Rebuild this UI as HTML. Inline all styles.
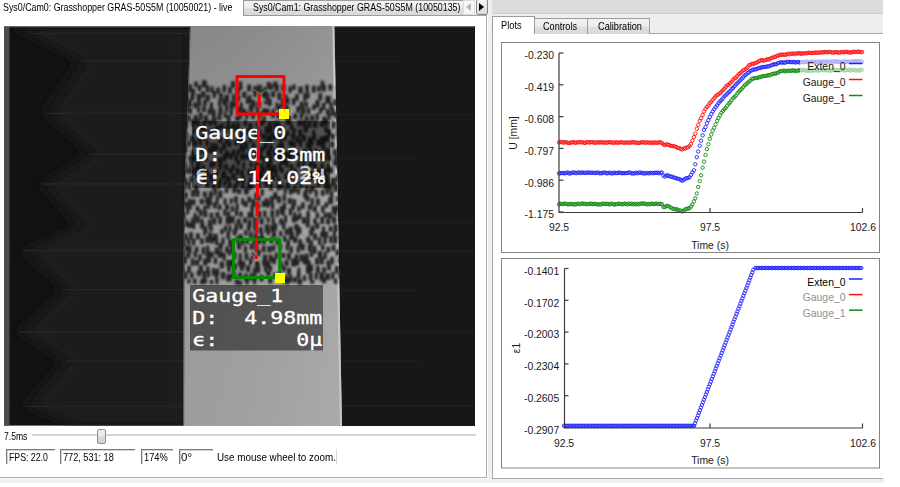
<!DOCTYPE html>
<html><head><meta charset="utf-8"><title>Cam view</title><style>
html,body{margin:0;padding:0}
body{width:900px;height:487px;overflow:hidden;background:#fff;position:relative;font-family:"Liberation Sans",Arial,sans-serif;font-size:9.8px;color:#000}
.a{position:absolute;white-space:nowrap}
.fld{position:absolute;top:449px;height:15px;border-top:1px solid #7a7a7a;border-left:1px solid #7a7a7a;box-sizing:border-box;box-shadow:inset 1px 1px 0 #d4d4d4}
.tab{position:absolute;box-sizing:border-box;border:1px solid #9a9ca2;border-bottom:none;background:linear-gradient(#f3f3f3 0,#ececec 48%,#dfdfdf 52%,#d8d8d8 100%)}
</style></head><body>
<div class="a" style="left:3px;top:2px;font-size:10.4px;line-height:12px;transform:scaleX(0.8521);transform-origin:0 0;">Sys0/Cam0: Grasshopper GRAS-50S5M (10050021) - live</div>
<div class="tab" style="left:243px;top:0;width:221px;height:16px;border-bottom:1px solid #9a9ca2;overflow:hidden"></div>
<div class="a" style="left:252.7px;top:0;width:210px;height:15px;overflow:hidden"><div class="a" style="left:0px;top:2px;font-size:10.4px;line-height:12px;transform:scaleX(0.8491);transform-origin:0 0;">Sys0/Cam1: Grasshopper GRAS-50S5M (10050135) -</div></div>
<div class="a" style="left:463px;top:0;width:12px;height:15px;background:#f6f6f6;border:1px solid #dcdcdc;box-sizing:border-box"></div>
<div class="a" style="left:466px;top:3px;width:0;height:0;border:4px solid transparent;border-right:5px solid #b8b8b8;border-left:none"></div>
<div class="a" style="left:476px;top:-1px;width:12px;height:16px;background:linear-gradient(#f4f4f4,#dadada);border:1px solid #858585;box-sizing:border-box;border-radius:2px"></div>
<div class="a" style="left:479px;top:2.7px;width:0;height:0;border:4px solid transparent;border-left:5px solid #000;border-right:none"></div>
<svg id="cam" width="470.5" height="399.6" viewBox="4 26 470.5 399.6" style="position:absolute;left:4px;top:26px"><defs><filter id="b" x="-5%" y="-5%" width="110%" height="110%"><feGaussianBlur stdDeviation="0.85"/></filter><filter id="b2" x="-10%" y="-10%" width="120%" height="120%"><feGaussianBlur stdDeviation="9 4"/></filter><linearGradient id="sg" x1="0" y1="26" x2="0" y2="425" gradientUnits="userSpaceOnUse"><stop offset="0" stop-color="#8d8d8d"/><stop offset="0.14" stop-color="#929292"/><stop offset="0.45" stop-color="#a0a0a0"/><stop offset="1" stop-color="#a4a4a4"/></linearGradient><linearGradient id="hg" x1="190" y1="0" x2="340" y2="0" gradientUnits="userSpaceOnUse"><stop offset="0" stop-color="#000" stop-opacity="0.04"/><stop offset="1" stop-color="#fff" stop-opacity="0.07"/></linearGradient><clipPath id="sc"><polygon points="190,26 334.5,26 342,426 183.3,426 184,205 188,100"/></clipPath></defs><rect x="4" y="26" width="470.5" height="399.6" fill="#121212"/><path filter="url(#b2)" fill="#1b1b1b" d="M12 26H190V113H47L82 61zM47 113.5H190V184H43L92 154zM43 184.5H190V250H25L80 226zM25 251H190V332H20L66 290zM20 332.5H190V406H27L66 361zM27 406.5H190V426H75z"/><path fill="#171717" d="M334 26H475V426H342z"/><rect x="33" y="32.7" width="157" height="1.4" fill="#272727"/><rect x="82" y="60.3" width="108" height="1.4" fill="#272727"/><rect x="47" y="112.7" width="143" height="1.4" fill="#272727"/><rect x="92" y="153.3" width="98" height="1.4" fill="#272727"/><rect x="43" y="183.3" width="147" height="1.4" fill="#272727"/><rect x="25" y="249.9" width="165" height="1.4" fill="#272727"/><rect x="66" y="288.9" width="124" height="1.4" fill="#272727"/><rect x="20" y="331.3" width="170" height="1.4" fill="#272727"/><rect x="66" y="360.3" width="124" height="1.4" fill="#272727"/><rect x="27" y="405.8" width="163" height="1.4" fill="#272727"/><rect x="334" y="39.3" width="140" height="1.4" fill="#1f1f1f"/><rect x="334" y="60.3" width="70" height="1.4" fill="#1f1f1f"/><rect x="334" y="114.3" width="140" height="1.4" fill="#1f1f1f"/><rect x="334" y="158.3" width="81" height="1.4" fill="#1f1f1f"/><rect x="334" y="183.3" width="140" height="1.4" fill="#1f1f1f"/><rect x="334" y="221.3" width="140" height="1.4" fill="#1f1f1f"/><rect x="334" y="250.3" width="140" height="1.4" fill="#1f1f1f"/><rect x="334" y="289.3" width="86" height="1.4" fill="#1f1f1f"/><rect x="334" y="331.3" width="140" height="1.4" fill="#1f1f1f"/><rect x="334" y="360.3" width="86" height="1.4" fill="#1f1f1f"/><rect x="334" y="405.3" width="140" height="1.4" fill="#1f1f1f"/><rect x="4" y="26" width="5.5" height="399.6" fill="#4c4c4c"/><rect x="4" y="26" width="470.5" height="1.2" fill="#6a6a6a"/><polygon points="190,26 334.5,26 342,426 183.3,426 184,205 188,100" fill="url(#sg)"/><polygon points="190,26 334.5,26 342,426 183.3,426 184,205 188,100" fill="url(#hg)"/><line x1="333.3" y1="26" x2="341" y2="426" stroke="#c6c6c6" stroke-width="2"/><polyline points="190.4,26 188.4,100 184.4,205 183.7,426" fill="none" stroke="#5a5a5a" stroke-width="1"/><g clip-path="url(#sc)"><path filter="url(#b)" fill="#222222" d="M194.2 81.4h3.5v5.7h-3.5zM201.9 80.2h4.8v7.4h-4.8zM231.0 81.3h4.3v6.4h-4.3zM238.6 81.2h3.5v6.2h-3.5zM266.7 81.9h4.0v6.5h-4.0zM273.3 81.4h4.1v6.3h-4.1zM320.6 80.7h3.4v6.5h-3.4zM180.7 85.9h4.3v7.0h-4.3zM187.9 84.6h4.2v7.6h-4.2zM191.2 88.8h3.9v6.6h-3.9zM197.8 85.1h3.5v5.9h-3.5zM205.9 85.6h3.7v6.7h-3.7zM210.6 86.5h3.1v6.4h-3.1zM216.3 87.6h3.8v6.1h-3.8zM222.5 85.1h3.5v7.1h-3.5zM228.0 87.0h3.8v6.5h-3.8zM235.5 87.4h4.2v7.5h-4.2zM238.8 84.4h3.7v5.6h-3.7zM247.2 84.6h4.0v6.9h-4.0zM253.2 85.9h3.7v7.6h-3.7zM257.2 84.8h4.7v7.8h-4.7zM263.1 87.0h3.8v5.5h-3.8zM268.7 84.0h4.1v6.0h-4.1zM274.6 84.6h4.3v6.7h-4.3zM281.1 84.2h4.3v6.8h-4.3zM288.4 86.2h3.5v6.6h-3.5zM292.3 84.4h3.3v5.5h-3.3zM298.3 86.4h4.5v7.0h-4.5zM305.1 84.8h3.7v7.5h-3.7zM311.9 85.8h3.8v6.9h-3.8zM317.1 85.9h3.6v5.5h-3.6zM321.5 84.2h4.2v7.3h-4.2zM328.4 84.6h3.7v6.0h-3.7zM335.9 85.4h3.6v5.4h-3.6zM340.3 83.8h3.4v5.6h-3.4zM177.1 93.7h3.8v7.1h-3.8zM183.3 95.8h3.3v7.0h-3.3zM190.2 94.5h4.2v5.7h-4.2zM196.7 93.7h4.3v6.9h-4.3zM201.2 91.2h4.2v6.6h-4.2zM205.9 94.8h4.1v6.5h-4.1zM212.6 91.1h3.4v7.0h-3.4zM218.9 93.2h4.0v7.1h-4.0zM224.4 94.6h4.7v7.4h-4.7zM231.7 94.2h3.5v6.5h-3.5zM236.0 95.8h4.3v5.4h-4.3zM242.2 91.8h4.3v5.9h-4.3zM247.6 95.0h3.8v7.4h-3.8zM253.2 90.7h3.7v6.4h-3.7zM261.7 90.7h4.1v7.2h-4.1zM265.8 92.6h3.6v7.6h-3.6zM271.0 91.2h4.2v6.0h-4.2zM277.3 92.6h4.3v7.3h-4.3zM284.4 94.4h3.2v7.0h-3.2zM295.2 94.1h3.5v6.6h-3.5zM303.2 93.3h3.4v7.4h-3.4zM306.5 92.5h3.2v5.9h-3.2zM318.4 93.3h3.9v7.3h-3.9zM325.3 95.7h5.4v8.1h-5.4zM336.5 91.3h3.3v6.5h-3.3zM344.0 93.1h3.8v5.5h-3.8zM180.4 98.3h3.4v6.8h-3.4zM187.2 99.6h4.6v7.5h-4.6zM193.3 102.2h3.7v5.9h-3.7zM197.2 100.2h4.0v6.3h-4.0zM203.1 99.4h3.6v6.9h-3.6zM209.6 102.6h3.5v7.2h-3.5zM217.8 100.2h3.3v5.9h-3.3zM222.0 98.7h5.6v6.5h-5.6zM229.4 101.4h4.4v7.4h-4.4zM232.6 101.1h3.6v6.2h-3.6zM239.5 102.6h3.3v7.5h-3.3zM245.7 97.9h3.7v6.2h-3.7zM250.3 99.7h5.4v7.9h-5.4zM256.9 101.5h4.3v6.1h-4.3zM264.3 99.2h3.5v5.4h-3.5zM268.0 98.8h3.7v7.5h-3.7zM275.4 102.4h3.3v7.2h-3.3zM280.7 99.3h4.8v7.9h-4.8zM285.8 97.8h3.8v6.1h-3.8zM291.8 98.1h3.7v7.0h-3.7zM299.6 101.5h4.2v6.9h-4.2zM304.5 101.4h3.4v5.9h-3.4zM315.4 100.1h4.2v7.2h-4.2zM321.6 102.7h3.9v7.4h-3.9zM329.4 102.5h3.2v6.7h-3.2zM333.5 98.9h3.9v6.8h-3.9zM339.3 99.2h3.4v7.1h-3.4zM178.2 107.8h3.2v5.8h-3.2zM185.4 106.1h3.8v6.2h-3.8zM188.8 108.3h3.4v5.4h-3.4zM196.9 106.9h3.3v5.4h-3.3zM202.0 106.4h3.8v5.7h-3.8zM207.5 108.7h4.4v5.8h-4.4zM212.0 109.3h3.6v7.4h-3.6zM218.4 106.6h4.2v7.2h-4.2zM224.8 105.1h3.4v7.0h-3.4zM229.6 108.9h3.3v6.7h-3.3zM237.3 106.7h4.0v6.4h-4.0zM242.1 108.5h4.1v6.4h-4.1zM248.6 105.0h4.9v7.3h-4.9zM255.6 107.2h3.2v6.5h-3.2zM262.2 108.3h4.2v5.8h-4.2zM265.4 108.6h4.3v5.5h-4.3zM271.7 108.7h3.3v6.5h-3.3zM277.7 104.7h3.3v5.8h-3.3zM285.1 105.1h3.8v6.8h-3.8zM296.2 106.4h4.1v6.4h-4.1zM301.1 107.8h4.4v6.7h-4.4zM306.7 107.7h3.7v6.5h-3.7zM312.2 104.5h3.6v5.6h-3.6zM318.7 107.7h3.7v5.7h-3.7zM325.9 109.0h4.1v6.3h-4.1zM330.9 107.9h3.7v7.5h-3.7zM337.4 106.6h3.4v5.5h-3.4zM342.1 105.5h3.9v6.5h-3.9zM180.4 111.7h4.3v7.1h-4.3zM186.8 115.3h3.7v5.9h-3.7zM193.6 115.0h4.2v7.0h-4.2zM198.8 112.8h3.9v7.5h-3.9zM203.8 115.3h4.3v7.0h-4.3zM211.8 114.7h4.0v6.9h-4.0zM217.5 113.7h4.0v6.7h-4.0zM223.6 112.2h3.1v5.6h-3.1zM226.7 115.0h3.9v6.9h-3.9zM235.1 115.7h4.3v5.5h-4.3zM239.1 112.0h3.1v7.3h-3.1zM245.2 111.9h3.2v7.1h-3.2zM251.0 112.9h4.0v6.2h-4.0zM258.1 111.6h3.6v6.4h-3.6zM262.7 115.9h3.2v7.2h-3.2zM271.0 111.4h3.7v6.5h-3.7zM276.5 112.8h4.3v6.0h-4.3zM281.7 111.8h4.1v6.9h-4.1zM286.9 116.0h4.4v8.2h-4.4zM293.1 113.4h4.2v5.9h-4.2zM299.5 113.2h3.5v5.7h-3.5zM304.7 115.4h3.9v5.7h-3.9zM310.2 115.1h4.2v5.7h-4.2zM315.6 113.1h3.3v7.5h-3.3zM322.2 116.5h4.1v7.0h-4.1zM327.6 113.4h3.1v6.3h-3.1zM334.3 112.1h3.9v6.3h-3.9zM341.1 113.6h3.4v7.0h-3.4zM178.6 121.6h3.7v6.1h-3.7zM184.6 121.6h3.4v6.3h-3.4zM191.2 119.3h4.0v7.1h-4.0zM195.8 119.1h4.1v7.5h-4.1zM202.3 121.0h3.9v7.2h-3.9zM208.1 120.3h4.1v5.7h-4.1zM213.1 118.4h3.6v6.3h-3.6zM220.1 123.2h3.8v5.9h-3.8zM226.1 122.5h3.9v6.4h-3.9zM231.5 122.6h4.2v6.4h-4.2zM236.5 122.7h3.4v6.2h-3.4zM243.6 119.8h3.4v6.1h-3.4zM248.4 123.1h4.2v5.5h-4.2zM255.8 121.6h3.1v5.4h-3.1zM259.5 119.5h4.1v6.2h-4.1zM267.8 121.5h4.1v6.9h-4.1zM273.0 121.1h4.1v6.4h-4.1zM277.1 120.9h3.2v6.4h-3.2zM285.4 118.3h4.2v6.4h-4.2zM289.8 123.3h3.2v6.8h-3.2zM297.4 120.0h4.4v6.5h-4.4zM302.3 120.1h4.2v6.2h-4.2zM307.6 120.5h3.8v7.2h-3.8zM313.0 120.9h4.4v6.8h-4.4zM319.9 121.6h4.1v5.5h-4.1zM324.9 118.3h3.3v7.4h-3.3zM331.8 121.5h3.9v6.9h-3.9zM337.2 122.3h4.4v6.6h-4.4zM342.8 122.6h4.1v6.6h-4.1zM180.8 128.5h4.3v5.5h-4.3zM192.7 127.3h3.2v6.8h-3.2zM199.3 125.8h4.4v5.6h-4.4zM203.8 129.0h3.3v5.5h-3.3zM209.2 128.5h4.0v6.4h-4.0zM214.8 125.3h5.1v8.0h-5.1zM223.5 127.7h3.2v6.2h-3.2zM229.2 127.1h3.9v6.8h-3.9zM235.0 128.1h3.5v5.5h-3.5zM240.3 130.3h4.2v6.7h-4.2zM246.5 128.3h4.3v7.2h-4.3zM252.1 129.4h4.3v5.5h-4.3zM257.0 129.6h4.1v6.9h-4.1zM264.6 126.2h4.1v7.4h-4.1zM268.6 126.5h4.1v7.1h-4.1zM274.5 128.2h4.3v7.3h-4.3zM280.3 126.1h4.0v6.2h-4.0zM285.7 130.4h3.6v5.6h-3.6zM292.6 127.9h3.1v5.5h-3.1zM298.2 129.3h3.7v7.5h-3.7zM303.4 126.2h4.5v6.4h-4.5zM312.2 129.9h3.2v6.7h-3.2zM324.2 126.4h3.2v6.0h-3.2zM327.1 129.3h4.0v6.8h-4.0zM335.8 128.7h3.5v6.7h-3.5zM339.1 127.7h3.3v5.9h-3.3zM177.0 132.3h4.3v5.9h-4.3zM183.7 132.6h4.3v7.3h-4.3zM189.7 135.4h4.5v6.7h-4.5zM196.9 133.5h3.6v5.7h-3.6zM201.6 133.8h4.3v5.7h-4.3zM217.8 136.3h4.7v6.5h-4.7zM225.0 136.8h3.4v6.7h-3.4zM230.1 132.5h3.2v6.7h-3.2zM237.7 136.3h5.1v6.6h-5.1zM241.5 136.3h3.5v7.3h-3.5zM248.7 136.6h3.4v5.8h-3.4zM255.0 132.1h3.8v6.4h-3.8zM261.8 133.8h4.0v6.2h-4.0zM266.5 134.8h5.0v7.4h-5.0zM271.1 133.4h5.4v6.3h-5.4zM278.6 135.1h3.8v6.9h-3.8zM283.0 134.7h3.8v6.0h-3.8zM291.3 132.9h3.8v7.0h-3.8zM295.7 136.5h3.8v6.3h-3.8zM301.4 134.4h4.4v7.2h-4.4zM307.9 137.1h4.3v5.9h-4.3zM312.3 134.4h3.8v5.4h-3.8zM320.0 136.3h5.4v8.1h-5.4zM324.8 134.9h4.3v6.8h-4.3zM330.7 133.7h3.9v5.7h-3.9zM337.2 134.9h3.3v5.7h-3.3zM342.4 132.6h3.8v7.2h-3.8zM181.7 141.4h3.8v6.7h-3.8zM186.9 141.0h3.9v5.4h-3.9zM192.8 140.5h4.4v6.1h-4.4zM198.5 139.3h3.6v6.4h-3.6zM205.4 139.8h3.5v6.2h-3.5zM210.6 142.8h4.1v7.1h-4.1zM215.2 143.5h3.1v7.1h-3.1zM222.0 143.1h4.2v6.7h-4.2zM227.5 141.0h3.8v6.2h-3.8zM233.9 140.0h3.5v5.7h-3.5zM239.4 143.4h4.2v7.5h-4.2zM244.5 141.9h3.7v7.4h-3.7zM251.9 142.6h3.6v6.2h-3.6zM263.6 141.3h3.9v7.6h-3.9zM268.9 144.1h4.2v6.5h-4.2zM277.0 143.6h3.6v5.7h-3.6zM280.3 142.3h3.9v6.2h-3.9zM288.1 140.6h4.0v5.4h-4.0zM292.1 141.6h3.8v6.0h-3.8zM298.7 139.6h3.3v7.1h-3.3zM305.9 142.2h5.3v6.3h-5.3zM310.3 139.9h3.4v5.6h-3.4zM316.3 139.3h4.3v6.7h-4.3zM321.1 143.8h4.2v6.1h-4.2zM330.0 141.6h4.3v5.9h-4.3zM339.6 141.9h3.2v6.6h-3.2zM179.0 147.7h3.4v5.8h-3.4zM183.4 146.7h4.0v5.6h-4.0zM190.9 150.1h3.3v6.2h-3.3zM197.1 148.5h3.4v6.4h-3.4zM201.9 147.8h3.4v6.7h-3.4zM207.6 147.3h4.1v6.2h-4.1zM212.1 146.8h4.2v6.1h-4.2zM219.3 147.4h3.2v6.1h-3.2zM224.9 150.6h4.1v7.3h-4.1zM231.7 149.4h3.6v6.3h-3.6zM236.5 149.2h3.3v5.7h-3.3zM241.4 146.7h3.4v6.1h-3.4zM247.8 150.3h3.8v7.0h-3.8zM253.1 150.2h5.3v6.8h-5.3zM259.8 146.5h4.1v5.9h-4.1zM266.2 149.8h5.4v6.8h-5.4zM273.0 149.7h4.2v6.8h-4.2zM278.3 150.7h4.5v7.9h-4.5zM284.3 150.9h3.9v6.6h-3.9zM289.1 147.5h3.3v7.0h-3.3zM295.8 150.8h3.6v6.1h-3.6zM302.9 148.8h4.1v5.8h-4.1zM308.9 146.5h3.5v6.2h-3.5zM314.3 148.2h3.2v6.1h-3.2zM318.0 151.1h4.1v5.6h-4.1zM325.5 148.2h4.5v7.4h-4.5zM332.8 149.3h3.4v5.9h-3.4zM336.6 146.9h3.9v7.3h-3.9zM344.0 147.6h3.3v7.2h-3.3zM182.1 154.0h3.2v6.6h-3.2zM188.3 155.4h3.7v5.7h-3.7zM191.7 155.1h5.6v6.4h-5.6zM197.1 157.2h4.2v7.1h-4.2zM204.3 154.6h3.7v6.9h-3.7zM217.7 157.3h4.4v7.5h-4.4zM222.6 154.3h3.8v7.5h-3.8zM229.4 152.9h3.3v6.9h-3.3zM234.4 155.0h3.8v6.6h-3.8zM240.2 153.4h5.4v6.8h-5.4zM246.1 154.0h3.8v5.6h-3.8zM258.4 153.3h4.2v6.3h-4.2zM262.4 156.8h3.2v5.9h-3.2zM268.9 156.5h3.7v7.4h-3.7zM276.6 153.7h4.1v6.2h-4.1zM280.9 156.6h5.5v7.8h-5.5zM288.2 153.4h4.3v6.9h-4.3zM293.4 153.4h3.1v5.6h-3.1zM299.6 154.8h3.3v7.3h-3.3zM303.3 154.6h3.3v6.5h-3.3zM311.8 156.3h3.6v6.4h-3.6zM317.1 153.2h3.5v5.9h-3.5zM322.2 155.2h3.9v6.3h-3.9zM327.0 155.2h4.4v5.5h-4.4zM334.4 154.2h3.8v6.6h-3.8zM341.2 157.3h4.1v6.8h-4.1zM179.2 164.6h4.0v6.1h-4.0zM183.4 162.6h3.6v5.5h-3.6zM189.4 161.0h3.4v6.2h-3.4zM195.5 162.7h4.7v6.6h-4.7zM201.8 164.6h3.5v7.4h-3.5zM209.1 161.6h4.1v6.3h-4.1zM212.7 161.0h3.1v5.8h-3.1zM218.3 162.8h4.2v6.8h-4.2zM223.9 163.9h4.2v6.2h-4.2zM231.5 164.5h3.4v6.1h-3.4zM236.5 160.0h3.6v5.5h-3.6zM242.1 162.1h3.1v7.4h-3.1zM249.5 161.4h3.2v5.7h-3.2zM254.5 162.5h3.9v6.6h-3.9zM259.8 163.4h4.1v7.1h-4.1zM265.8 162.4h5.5v6.5h-5.5zM272.0 164.8h4.6v7.9h-4.6zM278.3 162.6h3.3v7.5h-3.3zM285.5 160.5h3.1v7.1h-3.1zM289.6 163.9h3.7v6.1h-3.7zM296.5 161.8h4.2v5.5h-4.2zM302.3 160.9h3.4v6.0h-3.4zM308.3 161.3h4.4v5.9h-4.4zM313.0 163.6h4.2v6.0h-4.2zM320.2 162.8h3.7v6.7h-3.7zM326.4 164.2h3.3v7.3h-3.3zM332.9 159.7h4.3v5.7h-4.3zM336.0 161.5h4.3v7.0h-4.3zM344.1 163.3h3.1v6.5h-3.1zM182.6 168.2h4.2v5.7h-4.2zM187.5 167.4h4.1v6.5h-4.1zM192.3 167.7h4.4v7.3h-4.4zM197.3 166.8h3.8v6.3h-3.8zM205.1 169.4h3.8v6.9h-3.8zM214.8 169.8h4.3v6.0h-4.3zM221.1 171.0h5.3v8.2h-5.3zM228.4 168.2h4.4v5.4h-4.4zM235.7 167.8h3.9v7.0h-3.9zM240.4 170.1h3.5v6.8h-3.5zM247.2 169.1h4.0v6.5h-4.0zM251.9 169.3h3.8v7.2h-3.8zM258.1 170.9h5.5v8.1h-5.5zM262.4 167.4h3.4v5.6h-3.4zM268.2 168.7h4.4v6.9h-4.4zM274.3 170.1h3.6v6.5h-3.6zM279.8 167.6h3.8v5.5h-3.8zM286.4 170.9h3.2v6.8h-3.2zM293.5 168.5h3.2v6.4h-3.2zM305.6 168.5h5.2v6.9h-5.2zM310.8 171.3h4.1v5.5h-4.1zM316.4 169.1h4.3v6.4h-4.3zM323.4 168.7h3.2v6.9h-3.2zM327.6 167.0h5.4v6.4h-5.4zM341.3 171.1h3.3v6.1h-3.3zM177.2 175.1h3.4v7.3h-3.4zM183.3 178.0h4.1v7.3h-4.1zM189.4 175.9h3.7v6.7h-3.7zM195.9 173.8h3.5v6.6h-3.5zM202.5 175.0h4.0v7.2h-4.0zM208.7 173.8h4.9v7.6h-4.9zM212.4 178.3h3.8v7.2h-3.8zM218.4 177.9h3.3v7.4h-3.3zM226.6 175.7h4.0v6.0h-4.0zM231.7 173.7h4.2v6.0h-4.2zM235.9 178.2h3.5v7.3h-3.5zM241.4 175.5h3.9v5.9h-3.9zM248.6 177.0h3.2v7.2h-3.2zM254.8 175.0h3.6v7.1h-3.6zM261.8 176.6h3.8v5.6h-3.8zM265.6 178.3h3.1v6.7h-3.1zM271.0 175.2h3.7v5.9h-3.7zM276.9 176.4h3.2v6.6h-3.2zM284.2 174.0h3.9v5.7h-3.9zM289.0 174.4h4.3v6.1h-4.3zM294.7 178.1h3.3v6.5h-3.3zM302.0 176.1h3.6v5.8h-3.6zM309.0 176.1h4.3v5.4h-4.3zM314.3 174.7h4.1v5.7h-4.1zM318.9 178.1h3.2v6.7h-3.2zM324.1 174.8h5.1v8.4h-5.1zM330.9 177.7h4.9v8.2h-4.9zM336.0 174.8h4.1v6.9h-4.1zM342.3 175.2h4.4v7.6h-4.4zM182.3 184.3h3.9v5.8h-3.9zM187.6 182.2h3.3v7.5h-3.3zM194.2 185.1h4.1v7.2h-4.1zM205.5 181.7h4.2v5.9h-4.2zM211.8 184.0h4.0v6.3h-4.0zM217.4 182.5h3.2v6.8h-3.2zM223.2 180.4h3.7v5.4h-3.7zM228.1 182.1h3.4v6.2h-3.4zM233.4 184.0h3.7v6.9h-3.7zM241.0 181.4h3.5v7.5h-3.5zM247.2 182.5h3.7v7.5h-3.7zM250.7 183.1h3.1v5.8h-3.1zM257.2 180.9h3.8v7.3h-3.8zM264.1 180.8h3.9v6.4h-3.9zM269.1 183.1h4.0v7.4h-4.0zM276.5 184.0h3.8v6.4h-3.8zM279.8 182.1h3.3v7.5h-3.3zM285.7 182.4h4.1v6.8h-4.1zM292.8 185.5h3.9v7.2h-3.9zM299.6 181.8h3.3v6.7h-3.3zM305.0 185.0h3.3v7.0h-3.3zM310.4 185.4h4.4v5.8h-4.4zM316.5 181.0h3.4v6.3h-3.4zM323.9 182.7h4.2v6.8h-4.2zM328.4 183.3h4.0v7.1h-4.0zM333.7 183.7h4.6v7.9h-4.6zM341.7 181.8h3.4v5.6h-3.4zM179.0 187.9h3.5v6.8h-3.5zM183.6 192.2h4.1v6.2h-4.1zM191.0 190.1h3.8v6.9h-3.8zM195.4 189.9h4.2v6.9h-4.2zM202.7 191.4h4.2v5.7h-4.2zM208.8 191.2h4.2v6.8h-4.2zM213.8 188.7h3.2v6.7h-3.2zM218.0 190.8h4.4v7.2h-4.4zM224.6 187.3h3.9v5.7h-3.9zM232.1 187.5h4.2v5.6h-4.2zM237.2 188.4h4.1v5.9h-4.1zM243.8 187.4h5.0v7.1h-5.0zM254.2 192.4h3.2v6.5h-3.2zM260.5 189.1h3.3v6.3h-3.3zM273.2 192.2h4.3v7.0h-4.3zM283.6 187.5h3.3v6.2h-3.3zM288.8 188.1h4.1v6.4h-4.1zM297.0 188.0h3.2v6.6h-3.2zM303.2 191.0h4.3v7.6h-4.3zM308.9 188.0h3.1v5.9h-3.1zM314.6 189.7h3.2v7.4h-3.2zM320.8 189.8h3.9v5.9h-3.9zM325.8 188.0h3.4v6.4h-3.4zM330.0 191.1h3.2v6.4h-3.2zM337.8 190.9h3.7v5.7h-3.7zM344.8 188.5h3.6v7.1h-3.6zM179.7 199.3h5.3v6.3h-5.3zM187.5 199.0h3.9v7.4h-3.9zM191.5 199.3h4.0v5.8h-4.0zM199.6 198.8h4.3v5.4h-4.3zM205.0 197.3h5.3v6.4h-5.3zM208.9 198.1h3.1v7.2h-3.1zM215.5 196.4h3.2v7.5h-3.2zM223.4 198.6h3.2v6.2h-3.2zM229.7 198.2h3.1v5.6h-3.1zM234.0 196.3h3.9v6.8h-3.9zM241.1 197.9h3.1v6.9h-3.1zM247.3 196.5h4.0v6.0h-4.0zM251.6 199.3h4.0v7.5h-4.0zM257.0 195.5h3.6v5.4h-3.6zM264.5 198.2h4.3v7.1h-4.3zM269.9 196.1h3.8v7.5h-3.8zM276.8 196.3h4.3v6.9h-4.3zM282.6 194.3h3.4v7.0h-3.4zM287.8 198.1h4.1v5.9h-4.1zM292.3 199.2h3.9v6.7h-3.9zM305.5 195.6h4.1v5.8h-4.1zM310.6 198.0h3.2v7.5h-3.2zM315.8 198.6h4.1v6.9h-4.1zM328.1 197.6h5.0v6.7h-5.0zM335.9 196.1h4.0v5.7h-4.0zM339.1 195.5h4.1v6.0h-4.1zM177.1 203.1h3.6v6.8h-3.6zM185.0 202.3h3.1v6.4h-3.1zM188.6 203.6h3.3v5.9h-3.3zM195.6 206.0h3.8v5.6h-3.8zM203.1 205.6h3.2v7.5h-3.2zM206.6 201.5h3.4v7.4h-3.4zM212.8 202.2h4.0v6.2h-4.0zM217.7 204.5h3.8v5.5h-3.8zM225.2 204.2h3.9v5.7h-3.9zM230.7 205.8h3.3v5.9h-3.3zM235.5 203.4h3.3v5.8h-3.3zM243.5 201.2h4.3v5.9h-4.3zM250.4 204.3h3.4v7.2h-3.4zM256.2 202.8h3.6v6.2h-3.6zM261.6 201.1h3.9v6.0h-3.9zM265.7 201.7h4.3v5.7h-4.3zM271.0 202.3h3.3v6.7h-3.3zM279.5 206.1h3.4v7.5h-3.4zM282.7 202.6h3.5v7.5h-3.5zM291.1 204.5h3.8v5.7h-3.8zM297.3 206.1h3.4v5.6h-3.4zM301.1 202.3h3.6v6.6h-3.6zM307.7 204.6h4.1v5.4h-4.1zM312.7 206.1h4.1v5.9h-4.1zM321.1 205.8h3.4v7.0h-3.4zM324.6 202.2h3.4v5.5h-3.4zM331.7 206.0h3.9v6.2h-3.9zM335.8 204.6h3.3v6.2h-3.3zM343.6 204.8h4.4v5.8h-4.4zM181.3 212.4h4.2v6.7h-4.2zM186.2 208.4h3.1v5.8h-3.1zM193.5 213.1h3.1v5.7h-3.1zM198.8 209.7h3.6v6.5h-3.6zM203.3 211.2h4.0v6.0h-4.0zM209.5 212.8h3.8v5.5h-3.8zM215.5 212.1h4.1v5.6h-4.1zM223.2 209.2h3.2v6.9h-3.2zM226.9 211.3h3.4v6.0h-3.4zM234.8 209.1h3.5v6.8h-3.5zM239.4 211.4h3.4v5.7h-3.4zM247.4 212.1h3.5v6.1h-3.5zM250.4 210.7h3.3v7.4h-3.3zM257.7 210.7h3.6v7.0h-3.6zM263.2 210.5h3.4v6.9h-3.4zM270.4 209.9h3.7v7.4h-3.7zM275.8 209.4h3.1v7.6h-3.1zM280.7 208.4h4.1v7.1h-4.1zM288.7 208.3h3.5v7.1h-3.5zM293.2 212.3h3.3v5.8h-3.3zM298.2 213.1h3.3v6.0h-3.3zM306.4 211.1h3.5v6.4h-3.5zM315.6 212.4h3.5v5.8h-3.5zM323.6 212.5h3.8v5.4h-3.8zM327.9 212.4h4.2v6.0h-4.2zM333.2 209.2h4.3v6.3h-4.3zM341.6 212.2h4.4v7.0h-4.4zM177.6 219.3h3.3v6.6h-3.3zM185.0 219.5h3.3v7.5h-3.3zM191.0 217.7h3.7v6.1h-3.7zM195.2 216.2h4.4v6.9h-4.4zM200.2 218.8h3.4v6.4h-3.4zM207.9 219.6h3.7v7.4h-3.7zM212.1 218.0h4.2v6.5h-4.2zM218.4 216.8h3.6v7.5h-3.6zM225.5 217.1h5.2v7.1h-5.2zM230.6 216.1h4.1v7.2h-4.1zM236.6 218.6h4.3v5.8h-4.3zM243.0 217.5h4.0v5.7h-4.0zM247.8 219.6h3.8v7.1h-3.8zM253.2 217.5h4.3v7.4h-4.3zM259.5 218.2h4.1v6.3h-4.1zM266.5 217.3h3.2v5.4h-3.2zM271.6 217.6h3.3v6.7h-3.3zM279.1 218.6h4.0v6.0h-4.0zM284.0 215.3h3.2v7.2h-3.2zM291.7 216.6h4.1v5.9h-4.1zM295.4 215.7h3.4v5.6h-3.4zM301.8 217.2h4.4v6.5h-4.4zM306.7 215.8h3.2v6.9h-3.2zM313.2 218.5h3.6v5.7h-3.6zM320.3 216.7h3.9v7.4h-3.9zM326.0 218.7h4.3v5.7h-4.3zM332.0 216.7h4.3v6.6h-4.3zM338.3 215.0h3.5v6.5h-3.5zM343.3 219.7h3.9v6.4h-3.9zM180.2 223.7h3.6v6.2h-3.6zM187.9 222.6h4.0v5.4h-4.0zM191.9 222.1h3.4v7.0h-3.4zM200.1 222.3h4.3v6.4h-4.3zM203.3 226.3h4.1v6.7h-4.1zM209.0 225.5h3.9v5.6h-3.9zM223.9 225.5h3.3v5.8h-3.3zM228.3 225.3h3.1v6.4h-3.1zM234.4 223.6h3.6v7.5h-3.6zM239.0 223.8h4.0v5.4h-4.0zM246.9 224.0h4.0v6.7h-4.0zM253.2 225.0h3.5v6.2h-3.5zM258.7 227.0h4.0v6.1h-4.0zM264.7 224.3h4.7v8.2h-4.7zM270.3 224.8h4.3v6.7h-4.3zM274.1 223.2h3.2v7.3h-3.2zM281.8 222.3h3.7v7.0h-3.7zM288.5 226.7h4.4v6.3h-4.4zM294.3 223.9h4.3v6.4h-4.3zM297.6 226.9h3.8v7.0h-3.8zM305.9 222.0h3.7v5.6h-3.7zM310.7 225.5h4.0v6.2h-4.0zM315.5 222.8h3.8v6.1h-3.8zM321.8 226.5h3.4v7.4h-3.4zM328.6 226.2h3.7v5.6h-3.7zM333.5 224.2h4.2v7.5h-4.2zM340.0 222.7h3.3v6.4h-3.3zM178.8 231.8h3.3v7.3h-3.3zM184.2 233.7h3.6v6.6h-3.6zM189.1 232.0h3.8v7.5h-3.8zM195.8 233.2h4.0v6.2h-4.0zM203.1 229.0h3.1v6.6h-3.1zM208.0 232.3h4.3v7.6h-4.3zM213.2 233.7h4.7v7.5h-4.7zM220.3 228.8h3.4v5.8h-3.4zM226.4 231.4h3.5v7.5h-3.5zM232.6 229.3h4.1v6.0h-4.1zM238.6 233.9h3.9v6.8h-3.9zM244.2 230.0h3.3v5.7h-3.3zM248.8 231.7h3.8v6.3h-3.8zM253.9 232.6h3.4v7.2h-3.4zM260.1 232.7h3.4v6.9h-3.4zM266.8 229.6h3.2v5.6h-3.2zM271.8 231.4h4.3v5.9h-4.3zM279.0 230.9h3.3v5.5h-3.3zM284.6 229.0h3.8v6.1h-3.8zM289.0 232.2h4.9v7.7h-4.9zM295.7 229.7h3.2v6.9h-3.2zM309.1 229.2h3.8v6.5h-3.8zM313.0 233.6h4.2v6.4h-4.2zM320.2 231.7h4.4v5.5h-4.4zM324.1 231.7h4.0v6.2h-4.0zM332.9 231.0h3.1v5.6h-3.1zM338.5 232.4h3.2v6.2h-3.2zM181.5 240.5h3.8v5.8h-3.8zM186.9 238.7h3.4v6.0h-3.4zM191.8 238.4h3.5v7.1h-3.5zM200.1 238.3h3.6v6.0h-3.6zM205.3 236.7h3.7v6.2h-3.7zM209.6 236.8h4.1v6.8h-4.1zM215.0 237.5h3.1v7.5h-3.1zM221.4 237.4h3.2v7.2h-3.2zM228.2 239.3h4.3v7.3h-4.3zM235.6 236.6h3.3v6.0h-3.3zM241.3 237.8h3.3v7.1h-3.3zM245.6 238.7h3.4v5.4h-3.4zM252.6 237.3h4.0v6.8h-4.0zM257.0 236.6h4.2v7.4h-4.2zM262.1 237.3h3.9v6.7h-3.9zM269.2 237.5h4.3v5.7h-4.3zM275.7 237.6h3.1v7.2h-3.1zM282.9 235.9h3.6v5.9h-3.6zM286.8 239.8h3.2v6.0h-3.2zM293.0 236.7h4.3v6.4h-4.3zM298.3 239.3h3.8v7.6h-3.8zM306.1 236.7h4.2v6.2h-4.2zM309.5 240.6h3.6v5.7h-3.6zM317.8 237.4h3.6v7.5h-3.6zM323.1 237.9h3.6v5.9h-3.6zM329.2 235.7h3.4v7.5h-3.4zM333.4 236.5h3.9v6.9h-3.9zM339.2 238.2h3.5v6.6h-3.5zM177.4 246.0h3.8v6.8h-3.8zM185.0 245.4h4.1v6.2h-4.1zM188.5 245.7h3.1v7.5h-3.1zM194.7 246.8h3.8v5.4h-3.8zM201.7 247.0h3.4v7.4h-3.4zM206.1 245.7h3.3v5.8h-3.3zM214.6 247.6h3.7v7.2h-3.7zM218.4 243.0h4.3v6.6h-4.3zM225.1 246.6h3.7v5.8h-3.7zM230.3 246.1h3.6v5.9h-3.6zM237.0 242.6h4.1v7.0h-4.1zM243.6 245.9h3.6v6.6h-3.6zM249.7 243.5h4.0v6.2h-4.0zM254.6 244.5h3.9v5.9h-3.9zM261.7 245.4h3.9v6.8h-3.9zM267.4 246.0h4.2v6.4h-4.2zM272.1 245.1h3.3v5.9h-3.3zM278.5 243.5h3.7v6.6h-3.7zM285.6 243.5h3.1v7.1h-3.1zM289.5 246.3h3.4v6.7h-3.4zM296.5 246.1h3.3v6.6h-3.3zM300.5 243.8h4.4v6.8h-4.4zM307.7 244.4h4.1v7.0h-4.1zM312.4 246.1h4.1v7.6h-4.1zM321.0 244.5h3.5v5.6h-3.5zM326.4 246.8h3.7v5.8h-3.7zM331.6 244.9h3.8v5.9h-3.8zM338.5 247.6h3.1v6.8h-3.1zM342.6 246.2h4.0v5.9h-4.0zM180.8 251.1h3.9v6.1h-3.9zM186.3 252.2h4.2v5.7h-4.2zM193.5 251.3h3.3v6.3h-3.3zM198.1 254.4h3.6v6.4h-3.6zM205.7 251.4h4.1v6.0h-4.1zM209.5 251.7h4.1v6.0h-4.1zM217.7 250.6h5.0v7.1h-5.0zM222.6 253.1h3.2v7.4h-3.2zM227.8 250.1h3.7v5.4h-3.7zM233.1 252.1h3.3v7.2h-3.3zM238.6 253.3h3.2v7.5h-3.2zM244.5 253.0h3.9v7.0h-3.9zM251.1 252.4h3.5v6.0h-3.5zM256.8 250.0h3.8v6.5h-3.8zM262.9 254.5h4.3v7.6h-4.3zM268.6 254.6h3.9v7.2h-3.9zM274.6 252.6h3.4v6.4h-3.4zM281.2 252.8h4.0v5.5h-4.0zM286.8 253.0h4.1v6.8h-4.1zM294.5 254.4h4.1v7.6h-4.1zM299.7 254.3h4.2v7.3h-4.2zM304.5 253.6h4.2v7.3h-4.2zM309.9 251.2h3.2v5.7h-3.2zM317.8 251.0h4.6v7.1h-4.6zM323.8 251.4h3.1v7.5h-3.1zM335.6 250.0h4.2v5.4h-4.2zM341.3 250.2h3.8v6.0h-3.8zM178.9 259.6h3.9v7.4h-3.9zM183.5 256.8h3.5v7.0h-3.5zM190.7 258.6h3.7v7.1h-3.7zM194.9 259.9h4.3v5.7h-4.3zM203.2 258.6h4.1v6.8h-4.1zM207.3 256.4h3.7v6.3h-3.7zM213.7 257.5h3.5v6.5h-3.5zM219.6 261.5h4.6v6.9h-4.6zM226.3 259.9h4.4v7.2h-4.4zM230.3 259.5h3.2v6.6h-3.2zM237.7 260.5h3.9v5.7h-3.9zM241.4 260.9h4.0v6.0h-4.0zM249.0 258.3h3.5v7.1h-3.5zM254.9 261.1h5.0v8.4h-5.0zM262.1 259.5h3.7v6.8h-3.7zM265.9 260.9h4.4v7.9h-4.4zM272.0 257.5h4.0v6.6h-4.0zM279.2 261.2h3.4v6.5h-3.4zM284.4 260.3h4.3v5.4h-4.3zM291.2 258.4h5.0v8.2h-5.0zM295.4 259.9h3.9v5.7h-3.9zM302.9 257.4h4.3v7.2h-4.3zM306.5 260.3h4.1v6.8h-4.1zM315.0 257.9h4.0v6.9h-4.0zM319.7 257.0h4.2v7.4h-4.2zM326.4 260.3h3.5v5.6h-3.5zM330.3 256.9h3.6v7.3h-3.6zM337.8 256.7h3.4v6.9h-3.4zM342.7 257.6h4.1v7.0h-4.1zM180.6 264.7h3.5v7.0h-3.5zM187.3 265.7h3.6v7.4h-3.6zM198.6 265.2h4.2v7.4h-4.2zM206.0 266.6h3.5v6.5h-3.5zM211.8 268.0h3.7v7.5h-3.7zM216.1 268.4h3.1v7.3h-3.1zM227.3 265.2h3.6v6.7h-3.6zM232.8 263.6h3.8v6.7h-3.8zM239.7 264.1h4.3v6.7h-4.3zM245.9 265.5h4.4v6.6h-4.4zM252.7 267.8h3.4v7.1h-3.4zM256.3 266.7h4.0v6.2h-4.0zM263.8 266.6h3.4v5.5h-3.4zM268.8 265.5h3.4v5.8h-3.4zM281.9 266.0h3.9v5.6h-3.9zM287.0 267.7h4.1v7.0h-4.1zM297.4 267.8h3.1v6.6h-3.1zM305.8 266.1h5.3v7.3h-5.3zM309.2 264.5h4.0v7.1h-4.0zM315.8 266.0h3.9v7.0h-3.9zM322.1 267.0h3.9v5.8h-3.9zM327.2 264.5h3.8v6.0h-3.8zM335.0 266.1h3.4v7.5h-3.4zM339.3 265.4h4.3v5.5h-4.3zM177.3 271.2h3.3v6.2h-3.3zM183.7 271.7h3.8v7.1h-3.8zM190.0 272.6h3.5v5.7h-3.5zM196.9 270.3h4.0v5.9h-4.0zM202.1 271.1h3.9v6.3h-3.9zM206.8 270.7h3.3v6.6h-3.3zM214.6 270.8h3.4v7.1h-3.4zM220.8 271.9h4.4v7.4h-4.4zM226.3 274.1h5.3v7.5h-5.3zM231.8 271.8h4.0v6.3h-4.0zM238.0 272.6h4.2v6.1h-4.2zM244.0 273.6h3.7v7.5h-3.7zM249.5 273.3h3.1v7.4h-3.1zM253.2 274.9h3.5v5.5h-3.5zM259.5 274.8h4.0v6.7h-4.0zM266.2 270.4h4.4v5.6h-4.4zM273.0 272.7h3.7v5.7h-3.7zM278.0 271.5h3.4v6.4h-3.4zM284.2 275.2h3.4v5.4h-3.4zM288.6 274.9h3.7v7.3h-3.7zM296.7 271.2h3.8v6.7h-3.8zM302.9 275.2h3.3v5.9h-3.3zM308.7 272.8h3.8v7.4h-3.8zM314.5 273.1h3.3v6.3h-3.3zM319.3 272.3h4.8v8.3h-4.8zM325.3 273.2h4.8v6.7h-4.8zM331.3 271.8h3.2v7.4h-3.2zM338.2 272.5h3.6v5.9h-3.6zM343.5 275.2h4.0v6.4h-4.0zM187.2 279.2h3.4v4.3h-3.4zM193.0 278.7h3.7v5.1h-3.7zM200.1 278.7h3.9v5.6h-3.9zM203.1 277.6h3.8v5.8h-3.8zM209.7 280.0h3.5v4.0h-3.5zM215.3 278.0h3.3v5.9h-3.3zM234.7 279.4h3.8v5.2h-3.8zM238.4 280.7h3.7v4.2h-3.7zM245.3 278.3h3.5v6.0h-3.5zM253.0 280.4h3.2v3.8h-3.2zM268.2 278.0h4.1v5.6h-4.1zM282.7 278.3h3.3v5.1h-3.3zM286.0 277.9h3.4v6.5h-3.4zM293.0 277.2h4.2v5.4h-4.2zM297.8 278.5h4.2v6.3h-4.2zM310.4 279.9h3.8v3.9h-3.8zM321.8 277.5h4.2v5.7h-4.2zM334.0 278.8h3.3v5.0h-3.3zM340.3 280.9h4.2v4.1h-4.2z"/></g><rect x="192" y="121" width="138" height="67" fill="#000" fill-opacity="0.48"/><rect x="190" y="285" width="133" height="65.5" fill="#000" fill-opacity="0.48"/><rect x="237" y="76.6" width="47" height="37.5" fill="none" stroke="#ff0000" stroke-width="3" stroke-linejoin="round"/><rect x="233.5" y="239.5" width="46.3" height="38.1" fill="none" stroke="#078907" stroke-width="3" stroke-linejoin="round"/><rect x="279" y="109" width="10" height="10" fill="#ffff00"/><rect x="275" y="273" width="10" height="10" fill="#ffff00"/><path d="M254 89l12.5 12.5M266.5 89l-12.5 12.5" stroke="#22c022" stroke-width="1" fill="none"/><path d="M250.5 253.5l12 12M262.5 253.5l-12 12" stroke="#30d030" stroke-width="1" fill="none"/><g font-family="DejaVu Sans Mono, Liberation Mono, monospace" font-size="17" fill="#fff" stroke="#fff" stroke-width="0.3" transform="translate(195.2,0) scale(1.27,1)"><text x="0" y="139.3">Gauge_0</text><text x="0" y="161.3">D:  0.83mm</text><text x="0" y="183.8">ϵ: -14.02%</text><text x="0" y="178.8" fill-opacity="0.6">ϵ:      2µ</text></g><g font-family="DejaVu Sans Mono, Liberation Mono, monospace" font-size="17" fill="#fff" stroke="#fff" stroke-width="0.3" transform="translate(192.2,0) scale(1.27,1)"><text x="0" y="302.3">Gauge_1</text><text x="0" y="324.2">D:  4.98mm</text><text x="0" y="346">ϵ:      0µ</text></g><line x1="259.3" y1="93.4" x2="256.1" y2="259" stroke="#ff0000" stroke-width="3" stroke-dasharray="15 3"/></svg>
<div class="a" style="left:3.8px;top:431px;font-size:10.4px;line-height:12px;transform:scaleX(0.8263);transform-origin:0 0;">7.5ms</div>
<div class="a" style="left:32px;top:434px;width:444px;height:2px;background:#d4d6d6"></div>
<div class="a" style="left:97px;top:428.6px;width:9px;height:15px;border:1px solid #8f8f8f;border-radius:2px;background:linear-gradient(#f0f0f0 0,#e6e6e6 45%,#d8d8d8 55%,#d2d2d2 100%);box-sizing:border-box"></div>
<div class="fld" style="left:6px;width:49px"></div><div class="a" style="left:9px;top:451.7px;font-size:10.4px;line-height:12px;transform:scaleX(0.8390);transform-origin:0 0;">FPS: 22.0</div>
<div class="fld" style="left:60px;width:75px"></div><div class="a" style="left:63.4px;top:451.7px;font-size:10.4px;line-height:12px;transform:scaleX(0.8785);transform-origin:0 0;">772, 531: 18</div>
<div class="fld" style="left:141px;width:32px"></div><div class="a" style="left:144px;top:451.7px;font-size:10.4px;line-height:12px;transform:scaleX(0.8948);transform-origin:0 0;">174%</div>
<div class="fld" style="left:179px;width:34px"></div><div class="a" style="left:181.4px;top:451.7px;font-size:10.4px;line-height:12px;transform:scaleX(1.1064);transform-origin:0 0;">0°</div>
<div class="a" style="left:217px;top:451.7px;font-size:10.4px;line-height:12px;transform:scaleX(0.9488);transform-origin:0 0;">Use mouse wheel to zoom.</div>
<div class="a" style="left:336px;top:449px;width:1px;height:15px;background:#d8d8d8"></div>
<div class="a" style="left:0;top:477px;width:487px;height:1px;background:#a8aab0"></div>
<div class="a" style="left:486px;top:15px;width:1px;height:463px;background:#a8aab0"></div><div class="a" style="left:463px;top:15px;width:24px;height:1px;background:#a4a6aa"></div>
<div class="a" style="left:0;top:479px;width:884px;height:4px;background:#f0f0f0"></div>
<div class="a" style="left:488px;top:0;width:4px;height:483px;background:#f0f0f0"></div>
<div class="a" style="left:492px;top:0;width:391px;height:13px;background:#dcdcdc;border-bottom:1px solid #cbcbcb"></div>
<div class="a" style="left:492px;top:14px;width:391px;height:19px;background:#eeeeee"></div>
<div class="a" style="left:492px;top:33px;width:391px;height:446px;border:1px solid #a8aab0;border-right:none;background:#fff;box-sizing:border-box"></div>
<div class="tab" style="left:534px;top:18px;width:54px;height:16px"></div>
<div class="tab" style="left:587px;top:18px;width:63px;height:16px"></div>
<div class="tab" style="left:492px;top:16px;width:43px;height:18px;background:#fff"></div>
<div class="a" style="left:501.4px;top:19.5px;font-size:10.4px;line-height:12px;transform:scaleX(0.8910);transform-origin:0 0;">Plots</div>
<div class="a" style="left:543px;top:20.5px;font-size:10.4px;line-height:12px;transform:scaleX(0.8780);transform-origin:0 0;">Controls</div>
<div class="a" style="left:597.6px;top:20.5px;font-size:10.4px;line-height:12px;transform:scaleX(0.8851);transform-origin:0 0;">Calibration</div>
<svg id="plots" width="408" height="487" viewBox="492 0 408 487" style="position:absolute;left:492px;top:0"><rect x="501.5" y="42.5" width="378" height="210" fill="#fff" stroke="#828282"/><rect x="501.5" y="258.5" width="378" height="209.5" fill="#fff" stroke="#828282"/><g fill="none" stroke-width="0.9"><g stroke="#ff1010"><circle cx="559.0" cy="142.4" r="1.7"/><circle cx="560.5" cy="142.0" r="1.7"/><circle cx="561.9" cy="142.1" r="1.7"/><circle cx="563.4" cy="142.7" r="1.7"/><circle cx="564.8" cy="142.1" r="1.7"/><circle cx="566.3" cy="142.3" r="1.7"/><circle cx="567.7" cy="142.8" r="1.7"/><circle cx="569.2" cy="142.9" r="1.7"/><circle cx="570.6" cy="142.9" r="1.7"/><circle cx="572.1" cy="142.2" r="1.7"/><circle cx="573.5" cy="142.0" r="1.7"/><circle cx="575.0" cy="142.8" r="1.7"/><circle cx="576.4" cy="142.6" r="1.7"/><circle cx="577.9" cy="142.4" r="1.7"/><circle cx="579.3" cy="142.0" r="1.7"/><circle cx="580.8" cy="142.4" r="1.7"/><circle cx="582.2" cy="142.2" r="1.7"/><circle cx="583.7" cy="142.6" r="1.7"/><circle cx="585.1" cy="143.0" r="1.7"/><circle cx="586.6" cy="142.2" r="1.7"/><circle cx="588.0" cy="142.1" r="1.7"/><circle cx="589.5" cy="142.7" r="1.7"/><circle cx="590.9" cy="142.1" r="1.7"/><circle cx="592.4" cy="142.2" r="1.7"/><circle cx="593.8" cy="142.4" r="1.7"/><circle cx="595.3" cy="143.0" r="1.7"/><circle cx="596.7" cy="142.3" r="1.7"/><circle cx="598.2" cy="142.3" r="1.7"/><circle cx="599.6" cy="142.5" r="1.7"/><circle cx="601.1" cy="142.2" r="1.7"/><circle cx="602.5" cy="142.4" r="1.7"/><circle cx="604.0" cy="142.7" r="1.7"/><circle cx="605.4" cy="142.3" r="1.7"/><circle cx="606.9" cy="142.8" r="1.7"/><circle cx="608.3" cy="142.2" r="1.7"/><circle cx="609.8" cy="142.1" r="1.7"/><circle cx="611.2" cy="142.6" r="1.7"/><circle cx="612.7" cy="142.5" r="1.7"/><circle cx="614.1" cy="142.9" r="1.7"/><circle cx="615.6" cy="142.1" r="1.7"/><circle cx="617.0" cy="142.7" r="1.7"/><circle cx="618.5" cy="142.7" r="1.7"/><circle cx="619.9" cy="142.4" r="1.7"/><circle cx="621.4" cy="142.1" r="1.7"/><circle cx="622.8" cy="142.6" r="1.7"/><circle cx="624.3" cy="142.8" r="1.7"/><circle cx="625.7" cy="142.5" r="1.7"/><circle cx="627.2" cy="142.5" r="1.7"/><circle cx="628.6" cy="142.7" r="1.7"/><circle cx="630.1" cy="142.6" r="1.7"/><circle cx="631.5" cy="142.4" r="1.7"/><circle cx="633.0" cy="142.2" r="1.7"/><circle cx="634.4" cy="142.5" r="1.7"/><circle cx="635.9" cy="142.5" r="1.7"/><circle cx="637.3" cy="142.9" r="1.7"/><circle cx="638.8" cy="143.0" r="1.7"/><circle cx="640.2" cy="142.6" r="1.7"/><circle cx="641.7" cy="142.3" r="1.7"/><circle cx="643.1" cy="142.2" r="1.7"/><circle cx="644.6" cy="142.6" r="1.7"/><circle cx="646.0" cy="142.7" r="1.7"/><circle cx="647.5" cy="142.2" r="1.7"/><circle cx="648.9" cy="142.7" r="1.7"/><circle cx="650.4" cy="143.0" r="1.7"/><circle cx="651.8" cy="142.4" r="1.7"/><circle cx="653.3" cy="142.9" r="1.7"/><circle cx="654.7" cy="142.4" r="1.7"/><circle cx="656.2" cy="142.7" r="1.7"/><circle cx="657.6" cy="142.9" r="1.7"/><circle cx="659.1" cy="142.2" r="1.7"/><circle cx="660.5" cy="142.3" r="1.7"/><circle cx="662.0" cy="143.0" r="1.7"/><circle cx="663.4" cy="144.5" r="1.7"/><circle cx="664.9" cy="145.2" r="1.7"/><circle cx="666.3" cy="144.4" r="1.7"/><circle cx="667.8" cy="144.5" r="1.7"/><circle cx="669.2" cy="145.0" r="1.7"/><circle cx="670.7" cy="145.8" r="1.7"/><circle cx="672.1" cy="146.1" r="1.7"/><circle cx="673.6" cy="146.0" r="1.7"/><circle cx="675.0" cy="146.6" r="1.7"/><circle cx="676.5" cy="147.1" r="1.7"/><circle cx="677.9" cy="148.0" r="1.7"/><circle cx="679.4" cy="148.1" r="1.7"/><circle cx="680.8" cy="149.1" r="1.7"/><circle cx="682.3" cy="149.5" r="1.7"/><circle cx="683.7" cy="148.5" r="1.7"/><circle cx="685.2" cy="148.5" r="1.7"/><circle cx="686.6" cy="147.4" r="1.7"/><circle cx="688.1" cy="147.3" r="1.7"/><circle cx="689.5" cy="146.1" r="1.7"/><circle cx="691.0" cy="144.0" r="1.7"/><circle cx="692.4" cy="140.6" r="1.7"/><circle cx="693.9" cy="137.1" r="1.7"/><circle cx="695.3" cy="133.6" r="1.7"/><circle cx="696.8" cy="128.7" r="1.7"/><circle cx="698.2" cy="124.8" r="1.7"/><circle cx="699.7" cy="120.8" r="1.7"/><circle cx="701.1" cy="118.2" r="1.7"/><circle cx="702.6" cy="114.9" r="1.7"/><circle cx="704.0" cy="111.5" r="1.7"/><circle cx="705.5" cy="108.9" r="1.7"/><circle cx="706.9" cy="107.0" r="1.7"/><circle cx="708.4" cy="105.4" r="1.7"/><circle cx="709.8" cy="103.0" r="1.7"/><circle cx="711.3" cy="101.9" r="1.7"/><circle cx="712.7" cy="99.7" r="1.7"/><circle cx="714.2" cy="98.1" r="1.7"/><circle cx="715.6" cy="96.4" r="1.7"/><circle cx="717.1" cy="95.1" r="1.7"/><circle cx="718.5" cy="94.3" r="1.7"/><circle cx="720.0" cy="93.0" r="1.7"/><circle cx="721.4" cy="91.7" r="1.7"/><circle cx="722.9" cy="90.2" r="1.7"/><circle cx="724.3" cy="88.8" r="1.7"/><circle cx="725.8" cy="86.9" r="1.7"/><circle cx="727.2" cy="85.3" r="1.7"/><circle cx="728.7" cy="84.7" r="1.7"/><circle cx="730.1" cy="83.1" r="1.7"/><circle cx="731.6" cy="81.6" r="1.7"/><circle cx="733.0" cy="79.8" r="1.7"/><circle cx="734.5" cy="78.3" r="1.7"/><circle cx="735.9" cy="77.6" r="1.7"/><circle cx="737.4" cy="75.9" r="1.7"/><circle cx="738.8" cy="74.1" r="1.7"/><circle cx="740.3" cy="73.1" r="1.7"/><circle cx="741.7" cy="71.8" r="1.7"/><circle cx="743.2" cy="70.2" r="1.7"/><circle cx="744.6" cy="69.8" r="1.7"/><circle cx="746.1" cy="68.6" r="1.7"/><circle cx="747.5" cy="67.3" r="1.7"/><circle cx="749.0" cy="65.3" r="1.7"/><circle cx="750.4" cy="64.8" r="1.7"/><circle cx="751.9" cy="63.9" r="1.7"/><circle cx="753.3" cy="63.9" r="1.7"/><circle cx="754.8" cy="63.4" r="1.7"/><circle cx="756.2" cy="62.8" r="1.7"/><circle cx="757.7" cy="62.2" r="1.7"/><circle cx="759.1" cy="61.0" r="1.7"/><circle cx="760.6" cy="60.4" r="1.7"/><circle cx="762.0" cy="60.2" r="1.7"/><circle cx="763.5" cy="60.7" r="1.7"/><circle cx="764.9" cy="60.3" r="1.7"/><circle cx="766.4" cy="59.7" r="1.7"/><circle cx="767.8" cy="59.2" r="1.7"/><circle cx="769.3" cy="59.5" r="1.7"/><circle cx="770.7" cy="58.3" r="1.7"/><circle cx="772.2" cy="57.9" r="1.7"/><circle cx="773.6" cy="56.9" r="1.7"/><circle cx="775.1" cy="57.2" r="1.7"/><circle cx="776.5" cy="56.0" r="1.7"/><circle cx="778.0" cy="55.7" r="1.7"/><circle cx="779.4" cy="55.1" r="1.7"/><circle cx="780.9" cy="54.5" r="1.7"/><circle cx="782.3" cy="54.9" r="1.7"/><circle cx="783.8" cy="54.6" r="1.7"/><circle cx="785.2" cy="54.7" r="1.7"/><circle cx="786.7" cy="54.6" r="1.7"/><circle cx="788.1" cy="53.7" r="1.7"/><circle cx="789.6" cy="54.3" r="1.7"/><circle cx="791.0" cy="53.7" r="1.7"/><circle cx="792.5" cy="53.7" r="1.7"/><circle cx="793.9" cy="53.6" r="1.7"/><circle cx="795.4" cy="54.2" r="1.7"/><circle cx="796.8" cy="53.2" r="1.7"/><circle cx="798.3" cy="53.5" r="1.7"/><circle cx="799.7" cy="53.1" r="1.7"/><circle cx="801.2" cy="53.9" r="1.7"/><circle cx="802.6" cy="53.3" r="1.7"/><circle cx="804.1" cy="53.4" r="1.7"/><circle cx="805.5" cy="53.2" r="1.7"/><circle cx="807.0" cy="53.3" r="1.7"/><circle cx="808.4" cy="52.8" r="1.7"/><circle cx="809.9" cy="52.8" r="1.7"/><circle cx="811.3" cy="53.0" r="1.7"/><circle cx="812.8" cy="52.9" r="1.7"/><circle cx="814.2" cy="52.9" r="1.7"/><circle cx="815.7" cy="52.3" r="1.7"/><circle cx="817.1" cy="52.8" r="1.7"/><circle cx="818.6" cy="52.7" r="1.7"/><circle cx="820.0" cy="52.5" r="1.7"/><circle cx="821.5" cy="52.3" r="1.7"/><circle cx="822.9" cy="52.5" r="1.7"/><circle cx="824.4" cy="52.0" r="1.7"/><circle cx="825.8" cy="52.0" r="1.7"/><circle cx="827.3" cy="52.2" r="1.7"/><circle cx="828.7" cy="52.0" r="1.7"/><circle cx="830.2" cy="51.9" r="1.7"/><circle cx="831.6" cy="52.5" r="1.7"/><circle cx="833.1" cy="52.5" r="1.7"/><circle cx="834.5" cy="52.4" r="1.7"/><circle cx="836.0" cy="52.0" r="1.7"/><circle cx="837.4" cy="52.5" r="1.7"/><circle cx="838.9" cy="52.6" r="1.7"/><circle cx="840.3" cy="52.4" r="1.7"/><circle cx="841.8" cy="51.9" r="1.7"/><circle cx="843.2" cy="52.3" r="1.7"/><circle cx="844.7" cy="52.1" r="1.7"/><circle cx="846.1" cy="51.9" r="1.7"/><circle cx="847.6" cy="51.8" r="1.7"/><circle cx="849.0" cy="52.5" r="1.7"/><circle cx="850.5" cy="52.3" r="1.7"/><circle cx="851.9" cy="52.5" r="1.7"/><circle cx="853.4" cy="51.8" r="1.7"/><circle cx="854.8" cy="51.8" r="1.7"/><circle cx="856.3" cy="52.1" r="1.7"/><circle cx="857.7" cy="51.6" r="1.7"/><circle cx="859.2" cy="51.8" r="1.7"/><circle cx="860.6" cy="52.1" r="1.7"/><circle cx="862.1" cy="52.0" r="1.7"/></g><g stroke="#2020ff"><circle cx="559.0" cy="173.4" r="1.7"/><circle cx="560.5" cy="173.1" r="1.7"/><circle cx="561.9" cy="173.1" r="1.7"/><circle cx="563.4" cy="173.1" r="1.7"/><circle cx="564.8" cy="173.3" r="1.7"/><circle cx="566.3" cy="172.9" r="1.7"/><circle cx="567.7" cy="172.5" r="1.7"/><circle cx="569.2" cy="173.5" r="1.7"/><circle cx="570.6" cy="173.3" r="1.7"/><circle cx="572.1" cy="172.6" r="1.7"/><circle cx="573.5" cy="172.6" r="1.7"/><circle cx="575.0" cy="172.7" r="1.7"/><circle cx="576.4" cy="173.2" r="1.7"/><circle cx="577.9" cy="172.6" r="1.7"/><circle cx="579.3" cy="172.5" r="1.7"/><circle cx="580.8" cy="173.0" r="1.7"/><circle cx="582.2" cy="172.5" r="1.7"/><circle cx="583.7" cy="172.8" r="1.7"/><circle cx="585.1" cy="172.9" r="1.7"/><circle cx="586.6" cy="172.7" r="1.7"/><circle cx="588.0" cy="172.5" r="1.7"/><circle cx="589.5" cy="172.8" r="1.7"/><circle cx="590.9" cy="172.7" r="1.7"/><circle cx="592.4" cy="172.8" r="1.7"/><circle cx="593.8" cy="172.9" r="1.7"/><circle cx="595.3" cy="172.9" r="1.7"/><circle cx="596.7" cy="172.8" r="1.7"/><circle cx="598.2" cy="172.5" r="1.7"/><circle cx="599.6" cy="173.3" r="1.7"/><circle cx="601.1" cy="173.2" r="1.7"/><circle cx="602.5" cy="173.0" r="1.7"/><circle cx="604.0" cy="172.5" r="1.7"/><circle cx="605.4" cy="172.7" r="1.7"/><circle cx="606.9" cy="173.4" r="1.7"/><circle cx="608.3" cy="173.0" r="1.7"/><circle cx="609.8" cy="172.7" r="1.7"/><circle cx="611.2" cy="173.3" r="1.7"/><circle cx="612.7" cy="173.4" r="1.7"/><circle cx="614.1" cy="172.6" r="1.7"/><circle cx="615.6" cy="173.0" r="1.7"/><circle cx="617.0" cy="173.1" r="1.7"/><circle cx="618.5" cy="172.6" r="1.7"/><circle cx="619.9" cy="172.8" r="1.7"/><circle cx="621.4" cy="173.1" r="1.7"/><circle cx="622.8" cy="173.2" r="1.7"/><circle cx="624.3" cy="173.1" r="1.7"/><circle cx="625.7" cy="173.1" r="1.7"/><circle cx="627.2" cy="172.9" r="1.7"/><circle cx="628.6" cy="172.6" r="1.7"/><circle cx="630.1" cy="172.5" r="1.7"/><circle cx="631.5" cy="173.3" r="1.7"/><circle cx="633.0" cy="173.4" r="1.7"/><circle cx="634.4" cy="173.4" r="1.7"/><circle cx="635.9" cy="172.6" r="1.7"/><circle cx="637.3" cy="173.3" r="1.7"/><circle cx="638.8" cy="172.7" r="1.7"/><circle cx="640.2" cy="172.8" r="1.7"/><circle cx="641.7" cy="172.7" r="1.7"/><circle cx="643.1" cy="173.4" r="1.7"/><circle cx="644.6" cy="173.3" r="1.7"/><circle cx="646.0" cy="173.3" r="1.7"/><circle cx="647.5" cy="172.9" r="1.7"/><circle cx="648.9" cy="173.4" r="1.7"/><circle cx="650.4" cy="172.8" r="1.7"/><circle cx="651.8" cy="173.1" r="1.7"/><circle cx="653.3" cy="173.2" r="1.7"/><circle cx="654.7" cy="172.7" r="1.7"/><circle cx="656.2" cy="172.9" r="1.7"/><circle cx="657.6" cy="172.6" r="1.7"/><circle cx="659.1" cy="173.3" r="1.7"/><circle cx="660.5" cy="172.7" r="1.7"/><circle cx="662.0" cy="172.6" r="1.7"/><circle cx="663.4" cy="175.6" r="1.7"/><circle cx="664.9" cy="176.6" r="1.7"/><circle cx="666.3" cy="175.6" r="1.7"/><circle cx="667.8" cy="175.3" r="1.7"/><circle cx="669.2" cy="176.2" r="1.7"/><circle cx="670.7" cy="176.6" r="1.7"/><circle cx="672.1" cy="176.6" r="1.7"/><circle cx="673.6" cy="177.5" r="1.7"/><circle cx="675.0" cy="177.7" r="1.7"/><circle cx="676.5" cy="178.3" r="1.7"/><circle cx="677.9" cy="178.7" r="1.7"/><circle cx="679.4" cy="179.1" r="1.7"/><circle cx="680.8" cy="179.9" r="1.7"/><circle cx="682.3" cy="180.8" r="1.7"/><circle cx="683.7" cy="179.9" r="1.7"/><circle cx="685.2" cy="178.7" r="1.7"/><circle cx="686.6" cy="178.2" r="1.7"/><circle cx="688.1" cy="177.9" r="1.7"/><circle cx="689.5" cy="177.2" r="1.7"/><circle cx="691.0" cy="174.9" r="1.7"/><circle cx="692.4" cy="172.4" r="1.7"/><circle cx="693.9" cy="170.3" r="1.7"/><circle cx="695.3" cy="164.3" r="1.7"/><circle cx="696.8" cy="157.2" r="1.7"/><circle cx="698.2" cy="151.5" r="1.7"/><circle cx="699.7" cy="145.7" r="1.7"/><circle cx="701.1" cy="140.7" r="1.7"/><circle cx="702.6" cy="135.3" r="1.7"/><circle cx="704.0" cy="129.8" r="1.7"/><circle cx="705.5" cy="127.2" r="1.7"/><circle cx="706.9" cy="123.4" r="1.7"/><circle cx="708.4" cy="120.1" r="1.7"/><circle cx="709.8" cy="117.0" r="1.7"/><circle cx="711.3" cy="114.0" r="1.7"/><circle cx="712.7" cy="111.5" r="1.7"/><circle cx="714.2" cy="109.3" r="1.7"/><circle cx="715.6" cy="107.1" r="1.7"/><circle cx="717.1" cy="105.3" r="1.7"/><circle cx="718.5" cy="103.2" r="1.7"/><circle cx="720.0" cy="101.5" r="1.7"/><circle cx="721.4" cy="100.1" r="1.7"/><circle cx="722.9" cy="98.4" r="1.7"/><circle cx="724.3" cy="96.4" r="1.7"/><circle cx="725.8" cy="95.3" r="1.7"/><circle cx="727.2" cy="93.7" r="1.7"/><circle cx="728.7" cy="92.1" r="1.7"/><circle cx="730.1" cy="91.2" r="1.7"/><circle cx="731.6" cy="89.0" r="1.7"/><circle cx="733.0" cy="88.0" r="1.7"/><circle cx="734.5" cy="86.2" r="1.7"/><circle cx="735.9" cy="84.5" r="1.7"/><circle cx="737.4" cy="83.2" r="1.7"/><circle cx="738.8" cy="81.7" r="1.7"/><circle cx="740.3" cy="80.4" r="1.7"/><circle cx="741.7" cy="78.8" r="1.7"/><circle cx="743.2" cy="77.3" r="1.7"/><circle cx="744.6" cy="75.5" r="1.7"/><circle cx="746.1" cy="74.6" r="1.7"/><circle cx="747.5" cy="73.2" r="1.7"/><circle cx="749.0" cy="72.4" r="1.7"/><circle cx="750.4" cy="70.8" r="1.7"/><circle cx="751.9" cy="70.3" r="1.7"/><circle cx="753.3" cy="69.5" r="1.7"/><circle cx="754.8" cy="69.5" r="1.7"/><circle cx="756.2" cy="69.2" r="1.7"/><circle cx="757.7" cy="68.5" r="1.7"/><circle cx="759.1" cy="67.9" r="1.7"/><circle cx="760.6" cy="67.9" r="1.7"/><circle cx="762.0" cy="67.2" r="1.7"/><circle cx="763.5" cy="67.0" r="1.7"/><circle cx="764.9" cy="67.0" r="1.7"/><circle cx="766.4" cy="66.6" r="1.7"/><circle cx="767.8" cy="66.4" r="1.7"/><circle cx="769.3" cy="66.2" r="1.7"/><circle cx="770.7" cy="65.6" r="1.7"/><circle cx="772.2" cy="64.9" r="1.7"/><circle cx="773.6" cy="64.3" r="1.7"/><circle cx="775.1" cy="64.3" r="1.7"/><circle cx="776.5" cy="64.2" r="1.7"/><circle cx="778.0" cy="63.0" r="1.7"/><circle cx="779.4" cy="62.6" r="1.7"/><circle cx="780.9" cy="62.3" r="1.7"/><circle cx="782.3" cy="62.7" r="1.7"/><circle cx="783.8" cy="62.4" r="1.7"/><circle cx="785.2" cy="62.7" r="1.7"/><circle cx="786.7" cy="61.8" r="1.7"/><circle cx="788.1" cy="61.9" r="1.7"/><circle cx="789.6" cy="62.0" r="1.7"/><circle cx="791.0" cy="62.1" r="1.7"/><circle cx="792.5" cy="62.1" r="1.7"/><circle cx="793.9" cy="62.0" r="1.7"/><circle cx="795.4" cy="62.6" r="1.7"/><circle cx="796.8" cy="62.0" r="1.7"/><circle cx="798.3" cy="62.1" r="1.7"/><circle cx="799.7" cy="62.5" r="1.7"/><circle cx="801.2" cy="62.1" r="1.7"/><circle cx="802.6" cy="62.1" r="1.7"/><circle cx="804.1" cy="62.3" r="1.7"/><circle cx="805.5" cy="61.8" r="1.7"/><circle cx="807.0" cy="61.5" r="1.7"/><circle cx="808.4" cy="62.4" r="1.7"/><circle cx="809.9" cy="62.0" r="1.7"/><circle cx="811.3" cy="62.0" r="1.7"/><circle cx="812.8" cy="61.5" r="1.7"/><circle cx="814.2" cy="62.1" r="1.7"/><circle cx="815.7" cy="61.7" r="1.7"/><circle cx="817.1" cy="62.0" r="1.7"/><circle cx="818.6" cy="61.6" r="1.7"/><circle cx="820.0" cy="62.3" r="1.7"/><circle cx="821.5" cy="61.7" r="1.7"/><circle cx="822.9" cy="61.6" r="1.7"/><circle cx="824.4" cy="62.2" r="1.7"/><circle cx="825.8" cy="61.5" r="1.7"/><circle cx="827.3" cy="61.6" r="1.7"/><circle cx="828.7" cy="61.8" r="1.7"/><circle cx="830.2" cy="62.2" r="1.7"/><circle cx="831.6" cy="61.4" r="1.7"/><circle cx="833.1" cy="61.4" r="1.7"/><circle cx="834.5" cy="62.0" r="1.7"/><circle cx="836.0" cy="61.3" r="1.7"/><circle cx="837.4" cy="61.6" r="1.7"/><circle cx="838.9" cy="62.0" r="1.7"/><circle cx="840.3" cy="61.9" r="1.7"/><circle cx="841.8" cy="62.0" r="1.7"/><circle cx="843.2" cy="61.3" r="1.7"/><circle cx="844.7" cy="62.0" r="1.7"/><circle cx="846.1" cy="61.5" r="1.7"/><circle cx="847.6" cy="61.9" r="1.7"/><circle cx="849.0" cy="61.6" r="1.7"/><circle cx="850.5" cy="62.0" r="1.7"/><circle cx="851.9" cy="61.6" r="1.7"/><circle cx="853.4" cy="61.3" r="1.7"/><circle cx="854.8" cy="61.2" r="1.7"/><circle cx="856.3" cy="61.5" r="1.7"/><circle cx="857.7" cy="61.1" r="1.7"/><circle cx="859.2" cy="61.2" r="1.7"/><circle cx="860.6" cy="61.9" r="1.7"/><circle cx="862.1" cy="61.6" r="1.7"/></g><g stroke="#108a10"><circle cx="559.0" cy="204.4" r="1.7"/><circle cx="560.5" cy="203.7" r="1.7"/><circle cx="561.9" cy="204.0" r="1.7"/><circle cx="563.4" cy="204.0" r="1.7"/><circle cx="564.8" cy="203.6" r="1.7"/><circle cx="566.3" cy="203.8" r="1.7"/><circle cx="567.7" cy="204.4" r="1.7"/><circle cx="569.2" cy="204.2" r="1.7"/><circle cx="570.6" cy="204.0" r="1.7"/><circle cx="572.1" cy="204.1" r="1.7"/><circle cx="573.5" cy="204.4" r="1.7"/><circle cx="575.0" cy="204.5" r="1.7"/><circle cx="576.4" cy="204.1" r="1.7"/><circle cx="577.9" cy="203.6" r="1.7"/><circle cx="579.3" cy="204.4" r="1.7"/><circle cx="580.8" cy="203.7" r="1.7"/><circle cx="582.2" cy="203.7" r="1.7"/><circle cx="583.7" cy="203.6" r="1.7"/><circle cx="585.1" cy="204.0" r="1.7"/><circle cx="586.6" cy="204.1" r="1.7"/><circle cx="588.0" cy="204.0" r="1.7"/><circle cx="589.5" cy="204.0" r="1.7"/><circle cx="590.9" cy="203.6" r="1.7"/><circle cx="592.4" cy="204.2" r="1.7"/><circle cx="593.8" cy="204.0" r="1.7"/><circle cx="595.3" cy="203.8" r="1.7"/><circle cx="596.7" cy="204.3" r="1.7"/><circle cx="598.2" cy="204.4" r="1.7"/><circle cx="599.6" cy="204.4" r="1.7"/><circle cx="601.1" cy="204.5" r="1.7"/><circle cx="602.5" cy="203.6" r="1.7"/><circle cx="604.0" cy="203.9" r="1.7"/><circle cx="605.4" cy="203.9" r="1.7"/><circle cx="606.9" cy="203.8" r="1.7"/><circle cx="608.3" cy="204.2" r="1.7"/><circle cx="609.8" cy="204.4" r="1.7"/><circle cx="611.2" cy="203.6" r="1.7"/><circle cx="612.7" cy="204.0" r="1.7"/><circle cx="614.1" cy="204.5" r="1.7"/><circle cx="615.6" cy="204.4" r="1.7"/><circle cx="617.0" cy="204.0" r="1.7"/><circle cx="618.5" cy="203.6" r="1.7"/><circle cx="619.9" cy="204.0" r="1.7"/><circle cx="621.4" cy="204.0" r="1.7"/><circle cx="622.8" cy="204.3" r="1.7"/><circle cx="624.3" cy="203.7" r="1.7"/><circle cx="625.7" cy="203.8" r="1.7"/><circle cx="627.2" cy="204.5" r="1.7"/><circle cx="628.6" cy="203.5" r="1.7"/><circle cx="630.1" cy="204.1" r="1.7"/><circle cx="631.5" cy="203.6" r="1.7"/><circle cx="633.0" cy="204.3" r="1.7"/><circle cx="634.4" cy="203.9" r="1.7"/><circle cx="635.9" cy="204.4" r="1.7"/><circle cx="637.3" cy="203.7" r="1.7"/><circle cx="638.8" cy="204.4" r="1.7"/><circle cx="640.2" cy="203.7" r="1.7"/><circle cx="641.7" cy="203.5" r="1.7"/><circle cx="643.1" cy="203.6" r="1.7"/><circle cx="644.6" cy="203.6" r="1.7"/><circle cx="646.0" cy="203.9" r="1.7"/><circle cx="647.5" cy="204.5" r="1.7"/><circle cx="648.9" cy="203.9" r="1.7"/><circle cx="650.4" cy="204.2" r="1.7"/><circle cx="651.8" cy="203.5" r="1.7"/><circle cx="653.3" cy="204.0" r="1.7"/><circle cx="654.7" cy="204.0" r="1.7"/><circle cx="656.2" cy="203.6" r="1.7"/><circle cx="657.6" cy="204.1" r="1.7"/><circle cx="659.1" cy="203.9" r="1.7"/><circle cx="660.5" cy="203.8" r="1.7"/><circle cx="662.0" cy="204.3" r="1.7"/><circle cx="663.4" cy="207.0" r="1.7"/><circle cx="664.9" cy="207.1" r="1.7"/><circle cx="666.3" cy="206.1" r="1.7"/><circle cx="667.8" cy="205.8" r="1.7"/><circle cx="669.2" cy="206.6" r="1.7"/><circle cx="670.7" cy="207.5" r="1.7"/><circle cx="672.1" cy="208.4" r="1.7"/><circle cx="673.6" cy="208.9" r="1.7"/><circle cx="675.0" cy="209.4" r="1.7"/><circle cx="676.5" cy="209.0" r="1.7"/><circle cx="677.9" cy="210.1" r="1.7"/><circle cx="679.4" cy="210.5" r="1.7"/><circle cx="680.8" cy="210.6" r="1.7"/><circle cx="682.3" cy="211.4" r="1.7"/><circle cx="683.7" cy="210.5" r="1.7"/><circle cx="685.2" cy="209.4" r="1.7"/><circle cx="686.6" cy="209.0" r="1.7"/><circle cx="688.1" cy="208.4" r="1.7"/><circle cx="689.5" cy="208.3" r="1.7"/><circle cx="691.0" cy="206.6" r="1.7"/><circle cx="692.4" cy="204.5" r="1.7"/><circle cx="693.9" cy="201.4" r="1.7"/><circle cx="695.3" cy="198.3" r="1.7"/><circle cx="696.8" cy="193.5" r="1.7"/><circle cx="698.2" cy="187.0" r="1.7"/><circle cx="699.7" cy="181.2" r="1.7"/><circle cx="701.1" cy="175.2" r="1.7"/><circle cx="702.6" cy="167.7" r="1.7"/><circle cx="704.0" cy="161.6" r="1.7"/><circle cx="705.5" cy="155.0" r="1.7"/><circle cx="706.9" cy="149.1" r="1.7"/><circle cx="708.4" cy="144.3" r="1.7"/><circle cx="709.8" cy="138.8" r="1.7"/><circle cx="711.3" cy="134.6" r="1.7"/><circle cx="712.7" cy="130.6" r="1.7"/><circle cx="714.2" cy="127.7" r="1.7"/><circle cx="715.6" cy="124.4" r="1.7"/><circle cx="717.1" cy="120.9" r="1.7"/><circle cx="718.5" cy="117.9" r="1.7"/><circle cx="720.0" cy="115.3" r="1.7"/><circle cx="721.4" cy="112.8" r="1.7"/><circle cx="722.9" cy="110.9" r="1.7"/><circle cx="724.3" cy="109.2" r="1.7"/><circle cx="725.8" cy="107.8" r="1.7"/><circle cx="727.2" cy="105.7" r="1.7"/><circle cx="728.7" cy="103.6" r="1.7"/><circle cx="730.1" cy="102.3" r="1.7"/><circle cx="731.6" cy="100.3" r="1.7"/><circle cx="733.0" cy="98.2" r="1.7"/><circle cx="734.5" cy="96.9" r="1.7"/><circle cx="735.9" cy="95.5" r="1.7"/><circle cx="737.4" cy="93.3" r="1.7"/><circle cx="738.8" cy="91.7" r="1.7"/><circle cx="740.3" cy="90.1" r="1.7"/><circle cx="741.7" cy="88.8" r="1.7"/><circle cx="743.2" cy="87.1" r="1.7"/><circle cx="744.6" cy="85.3" r="1.7"/><circle cx="746.1" cy="84.4" r="1.7"/><circle cx="747.5" cy="82.9" r="1.7"/><circle cx="749.0" cy="81.7" r="1.7"/><circle cx="750.4" cy="80.7" r="1.7"/><circle cx="751.9" cy="78.7" r="1.7"/><circle cx="753.3" cy="78.7" r="1.7"/><circle cx="754.8" cy="78.1" r="1.7"/><circle cx="756.2" cy="78.0" r="1.7"/><circle cx="757.7" cy="77.9" r="1.7"/><circle cx="759.1" cy="77.2" r="1.7"/><circle cx="760.6" cy="77.0" r="1.7"/><circle cx="762.0" cy="76.4" r="1.7"/><circle cx="763.5" cy="76.1" r="1.7"/><circle cx="764.9" cy="76.0" r="1.7"/><circle cx="766.4" cy="75.8" r="1.7"/><circle cx="767.8" cy="75.2" r="1.7"/><circle cx="769.3" cy="75.4" r="1.7"/><circle cx="770.7" cy="74.8" r="1.7"/><circle cx="772.2" cy="74.1" r="1.7"/><circle cx="773.6" cy="73.6" r="1.7"/><circle cx="775.1" cy="73.7" r="1.7"/><circle cx="776.5" cy="73.2" r="1.7"/><circle cx="778.0" cy="72.8" r="1.7"/><circle cx="779.4" cy="71.6" r="1.7"/><circle cx="780.9" cy="71.0" r="1.7"/><circle cx="782.3" cy="71.1" r="1.7"/><circle cx="783.8" cy="70.5" r="1.7"/><circle cx="785.2" cy="71.3" r="1.7"/><circle cx="786.7" cy="71.0" r="1.7"/><circle cx="788.1" cy="70.7" r="1.7"/><circle cx="789.6" cy="70.7" r="1.7"/><circle cx="791.0" cy="70.9" r="1.7"/><circle cx="792.5" cy="70.4" r="1.7"/><circle cx="793.9" cy="70.5" r="1.7"/><circle cx="795.4" cy="70.9" r="1.7"/><circle cx="796.8" cy="70.8" r="1.7"/><circle cx="798.3" cy="70.6" r="1.7"/><circle cx="799.7" cy="70.1" r="1.7"/><circle cx="801.2" cy="70.2" r="1.7"/><circle cx="802.6" cy="70.2" r="1.7"/><circle cx="804.1" cy="70.0" r="1.7"/><circle cx="805.5" cy="70.6" r="1.7"/><circle cx="807.0" cy="70.5" r="1.7"/><circle cx="808.4" cy="70.9" r="1.7"/><circle cx="809.9" cy="70.5" r="1.7"/><circle cx="811.3" cy="70.8" r="1.7"/><circle cx="812.8" cy="70.4" r="1.7"/><circle cx="814.2" cy="70.4" r="1.7"/><circle cx="815.7" cy="70.2" r="1.7"/><circle cx="817.1" cy="70.3" r="1.7"/><circle cx="818.6" cy="70.8" r="1.7"/><circle cx="820.0" cy="70.3" r="1.7"/><circle cx="821.5" cy="69.8" r="1.7"/><circle cx="822.9" cy="70.2" r="1.7"/><circle cx="824.4" cy="70.0" r="1.7"/><circle cx="825.8" cy="70.4" r="1.7"/><circle cx="827.3" cy="70.3" r="1.7"/><circle cx="828.7" cy="70.2" r="1.7"/><circle cx="830.2" cy="70.7" r="1.7"/><circle cx="831.6" cy="70.5" r="1.7"/><circle cx="833.1" cy="69.8" r="1.7"/><circle cx="834.5" cy="69.8" r="1.7"/><circle cx="836.0" cy="70.4" r="1.7"/><circle cx="837.4" cy="70.3" r="1.7"/><circle cx="838.9" cy="70.3" r="1.7"/><circle cx="840.3" cy="70.2" r="1.7"/><circle cx="841.8" cy="69.7" r="1.7"/><circle cx="843.2" cy="70.1" r="1.7"/><circle cx="844.7" cy="70.5" r="1.7"/><circle cx="846.1" cy="70.2" r="1.7"/><circle cx="847.6" cy="69.7" r="1.7"/><circle cx="849.0" cy="69.7" r="1.7"/><circle cx="850.5" cy="70.5" r="1.7"/><circle cx="851.9" cy="70.1" r="1.7"/><circle cx="853.4" cy="69.7" r="1.7"/><circle cx="854.8" cy="70.3" r="1.7"/><circle cx="856.3" cy="70.5" r="1.7"/><circle cx="857.7" cy="70.4" r="1.7"/><circle cx="859.2" cy="70.2" r="1.7"/><circle cx="860.6" cy="70.3" r="1.7"/><circle cx="862.1" cy="69.6" r="1.7"/></g></g><rect x="800" y="56" width="66" height="50" fill="#fff" fill-opacity="0.6"/><path d="M559 53V212.5H862.5" fill="none" stroke="#3c3c3c" stroke-width="1.2"/><path d="M559 53.0h4.5" stroke="#3c3c3c" stroke-width="1.2"/><text font-family="Liberation Sans, Arial, sans-serif" font-size="10.4" fill="#1a1a1a" x="554" y="59.4" text-anchor="end">-0.230</text><path d="M559 84.8h4.5" stroke="#3c3c3c" stroke-width="1.2"/><text font-family="Liberation Sans, Arial, sans-serif" font-size="10.4" fill="#1a1a1a" x="554" y="91.2" text-anchor="end">-0.419</text><path d="M559 116.6h4.5" stroke="#3c3c3c" stroke-width="1.2"/><text font-family="Liberation Sans, Arial, sans-serif" font-size="10.4" fill="#1a1a1a" x="554" y="123.0" text-anchor="end">-0.608</text><path d="M559 148.4h4.5" stroke="#3c3c3c" stroke-width="1.2"/><text font-family="Liberation Sans, Arial, sans-serif" font-size="10.4" fill="#1a1a1a" x="554" y="154.8" text-anchor="end">-0.797</text><path d="M559 180.2h4.5" stroke="#3c3c3c" stroke-width="1.2"/><text font-family="Liberation Sans, Arial, sans-serif" font-size="10.4" fill="#1a1a1a" x="554" y="186.6" text-anchor="end">-0.986</text><path d="M559 212.0h4.5" stroke="#3c3c3c" stroke-width="1.2"/><text font-family="Liberation Sans, Arial, sans-serif" font-size="10.4" fill="#1a1a1a" x="554" y="218.4" text-anchor="end">-1.175</text><path d="M710 212.5v-4.5" stroke="#3c3c3c" stroke-width="1.2"/><path d="M862.5 212.5v-4.5" stroke="#3c3c3c" stroke-width="1.2"/><text font-family="Liberation Sans, Arial, sans-serif" font-size="10.4" fill="#1a1a1a" x="559" y="231" text-anchor="middle">92.5</text><text font-family="Liberation Sans, Arial, sans-serif" font-size="10.4" fill="#1a1a1a" x="710" y="231" text-anchor="middle">97.5</text><text font-family="Liberation Sans, Arial, sans-serif" font-size="10.4" fill="#1a1a1a" x="863" y="231" text-anchor="middle">102.6</text><text font-family="Liberation Sans, Arial, sans-serif" font-size="10.4" fill="#1a1a1a" x="710" y="249" text-anchor="middle">Time (s)</text><text font-family="Liberation Sans, Arial, sans-serif" font-size="10.4" fill="#1a1a1a" transform="translate(517,133) rotate(-90)" text-anchor="middle">U [mm]</text><text font-family="Liberation Sans, Arial, sans-serif" font-size="10.4" fill="#1a1a1a" x="845.5" y="69.7" text-anchor="end">Exten_0</text><path d="M849 63.5h13.5" stroke="#2020ff" stroke-width="1.5"/><text font-family="Liberation Sans, Arial, sans-serif" font-size="10.4" fill="#1a1a1a" x="845.5" y="85.7" text-anchor="end">Gauge_0</text><path d="M849 79.5h13.5" stroke="#ff1010" stroke-width="1.5"/><text font-family="Liberation Sans, Arial, sans-serif" font-size="10.4" fill="#1a1a1a" x="845.5" y="101.7" text-anchor="end">Gauge_1</text><path d="M849 95.5h13.5" stroke="#108a10" stroke-width="1.5"/><g fill="none" stroke="#2020ff" stroke-width="0.9"><circle cx="564.0" cy="425.8" r="1.7"/><circle cx="565.5" cy="425.8" r="1.7"/><circle cx="566.9" cy="425.8" r="1.7"/><circle cx="568.4" cy="425.8" r="1.7"/><circle cx="569.8" cy="425.8" r="1.7"/><circle cx="571.3" cy="425.8" r="1.7"/><circle cx="572.7" cy="425.8" r="1.7"/><circle cx="574.2" cy="425.8" r="1.7"/><circle cx="575.6" cy="425.8" r="1.7"/><circle cx="577.1" cy="425.8" r="1.7"/><circle cx="578.5" cy="425.8" r="1.7"/><circle cx="580.0" cy="425.8" r="1.7"/><circle cx="581.4" cy="425.8" r="1.7"/><circle cx="582.9" cy="425.8" r="1.7"/><circle cx="584.3" cy="425.8" r="1.7"/><circle cx="585.8" cy="425.8" r="1.7"/><circle cx="587.2" cy="425.8" r="1.7"/><circle cx="588.7" cy="425.8" r="1.7"/><circle cx="590.1" cy="425.8" r="1.7"/><circle cx="591.6" cy="425.8" r="1.7"/><circle cx="593.0" cy="425.8" r="1.7"/><circle cx="594.5" cy="425.8" r="1.7"/><circle cx="595.9" cy="425.8" r="1.7"/><circle cx="597.4" cy="425.8" r="1.7"/><circle cx="598.8" cy="425.8" r="1.7"/><circle cx="600.3" cy="425.8" r="1.7"/><circle cx="601.7" cy="425.8" r="1.7"/><circle cx="603.2" cy="425.8" r="1.7"/><circle cx="604.6" cy="425.8" r="1.7"/><circle cx="606.1" cy="425.8" r="1.7"/><circle cx="607.5" cy="425.8" r="1.7"/><circle cx="609.0" cy="425.8" r="1.7"/><circle cx="610.4" cy="425.8" r="1.7"/><circle cx="611.9" cy="425.8" r="1.7"/><circle cx="613.3" cy="425.8" r="1.7"/><circle cx="614.8" cy="425.8" r="1.7"/><circle cx="616.2" cy="425.8" r="1.7"/><circle cx="617.7" cy="425.8" r="1.7"/><circle cx="619.1" cy="425.8" r="1.7"/><circle cx="620.6" cy="425.8" r="1.7"/><circle cx="622.0" cy="425.8" r="1.7"/><circle cx="623.5" cy="425.8" r="1.7"/><circle cx="624.9" cy="425.8" r="1.7"/><circle cx="626.4" cy="425.8" r="1.7"/><circle cx="627.8" cy="425.8" r="1.7"/><circle cx="629.3" cy="425.8" r="1.7"/><circle cx="630.7" cy="425.8" r="1.7"/><circle cx="632.2" cy="425.8" r="1.7"/><circle cx="633.6" cy="425.8" r="1.7"/><circle cx="635.1" cy="425.8" r="1.7"/><circle cx="636.5" cy="425.8" r="1.7"/><circle cx="638.0" cy="425.8" r="1.7"/><circle cx="639.4" cy="425.8" r="1.7"/><circle cx="640.9" cy="425.8" r="1.7"/><circle cx="642.3" cy="425.8" r="1.7"/><circle cx="643.8" cy="425.8" r="1.7"/><circle cx="645.2" cy="425.8" r="1.7"/><circle cx="646.7" cy="425.8" r="1.7"/><circle cx="648.1" cy="425.8" r="1.7"/><circle cx="649.6" cy="425.8" r="1.7"/><circle cx="651.0" cy="425.8" r="1.7"/><circle cx="652.5" cy="425.8" r="1.7"/><circle cx="653.9" cy="425.8" r="1.7"/><circle cx="655.4" cy="425.8" r="1.7"/><circle cx="656.8" cy="425.8" r="1.7"/><circle cx="658.3" cy="425.8" r="1.7"/><circle cx="659.7" cy="425.8" r="1.7"/><circle cx="661.2" cy="425.8" r="1.7"/><circle cx="662.6" cy="425.8" r="1.7"/><circle cx="664.1" cy="425.8" r="1.7"/><circle cx="665.5" cy="425.8" r="1.7"/><circle cx="667.0" cy="425.8" r="1.7"/><circle cx="668.4" cy="425.8" r="1.7"/><circle cx="669.9" cy="425.8" r="1.7"/><circle cx="671.3" cy="425.8" r="1.7"/><circle cx="672.8" cy="425.8" r="1.7"/><circle cx="674.2" cy="425.8" r="1.7"/><circle cx="675.7" cy="425.8" r="1.7"/><circle cx="677.1" cy="425.8" r="1.7"/><circle cx="678.6" cy="425.8" r="1.7"/><circle cx="680.0" cy="425.8" r="1.7"/><circle cx="681.5" cy="425.8" r="1.7"/><circle cx="682.9" cy="425.8" r="1.7"/><circle cx="684.4" cy="425.8" r="1.7"/><circle cx="685.8" cy="425.8" r="1.7"/><circle cx="687.3" cy="425.8" r="1.7"/><circle cx="688.7" cy="425.8" r="1.7"/><circle cx="690.2" cy="425.8" r="1.7"/><circle cx="691.6" cy="425.8" r="1.7"/><circle cx="693.1" cy="425.8" r="1.7"/><circle cx="755.4" cy="268.0" r="1.7"/><circle cx="756.9" cy="268.0" r="1.7"/><circle cx="758.3" cy="268.0" r="1.7"/><circle cx="759.8" cy="268.0" r="1.7"/><circle cx="761.2" cy="268.0" r="1.7"/><circle cx="762.7" cy="268.0" r="1.7"/><circle cx="764.1" cy="268.0" r="1.7"/><circle cx="765.6" cy="268.0" r="1.7"/><circle cx="767.0" cy="268.0" r="1.7"/><circle cx="768.5" cy="268.0" r="1.7"/><circle cx="769.9" cy="268.0" r="1.7"/><circle cx="771.4" cy="268.0" r="1.7"/><circle cx="772.8" cy="268.0" r="1.7"/><circle cx="774.3" cy="268.0" r="1.7"/><circle cx="775.7" cy="268.0" r="1.7"/><circle cx="777.2" cy="268.0" r="1.7"/><circle cx="778.6" cy="268.0" r="1.7"/><circle cx="780.1" cy="268.0" r="1.7"/><circle cx="781.5" cy="268.0" r="1.7"/><circle cx="783.0" cy="268.0" r="1.7"/><circle cx="784.4" cy="268.0" r="1.7"/><circle cx="785.9" cy="268.0" r="1.7"/><circle cx="787.3" cy="268.0" r="1.7"/><circle cx="788.8" cy="268.0" r="1.7"/><circle cx="790.2" cy="268.0" r="1.7"/><circle cx="791.7" cy="268.0" r="1.7"/><circle cx="793.1" cy="268.0" r="1.7"/><circle cx="794.6" cy="268.0" r="1.7"/><circle cx="796.0" cy="268.0" r="1.7"/><circle cx="797.5" cy="268.0" r="1.7"/><circle cx="798.9" cy="268.0" r="1.7"/><circle cx="800.4" cy="268.0" r="1.7"/><circle cx="801.8" cy="268.0" r="1.7"/><circle cx="803.3" cy="268.0" r="1.7"/><circle cx="804.7" cy="268.0" r="1.7"/><circle cx="806.2" cy="268.0" r="1.7"/><circle cx="807.6" cy="268.0" r="1.7"/><circle cx="809.1" cy="268.0" r="1.7"/><circle cx="810.5" cy="268.0" r="1.7"/><circle cx="812.0" cy="268.0" r="1.7"/><circle cx="813.4" cy="268.0" r="1.7"/><circle cx="814.9" cy="268.0" r="1.7"/><circle cx="816.3" cy="268.0" r="1.7"/><circle cx="817.8" cy="268.0" r="1.7"/><circle cx="819.2" cy="268.0" r="1.7"/><circle cx="820.7" cy="268.0" r="1.7"/><circle cx="822.1" cy="268.0" r="1.7"/><circle cx="823.6" cy="268.0" r="1.7"/><circle cx="825.0" cy="268.0" r="1.7"/><circle cx="826.5" cy="268.0" r="1.7"/><circle cx="827.9" cy="268.0" r="1.7"/><circle cx="829.4" cy="268.0" r="1.7"/><circle cx="830.8" cy="268.0" r="1.7"/><circle cx="832.3" cy="268.0" r="1.7"/><circle cx="833.7" cy="268.0" r="1.7"/><circle cx="835.2" cy="268.0" r="1.7"/><circle cx="836.6" cy="268.0" r="1.7"/><circle cx="838.1" cy="268.0" r="1.7"/><circle cx="839.5" cy="268.0" r="1.7"/><circle cx="841.0" cy="268.0" r="1.7"/><circle cx="842.4" cy="268.0" r="1.7"/><circle cx="843.9" cy="268.0" r="1.7"/><circle cx="845.3" cy="268.0" r="1.7"/><circle cx="846.8" cy="268.0" r="1.7"/><circle cx="848.2" cy="268.0" r="1.7"/><circle cx="849.7" cy="268.0" r="1.7"/><circle cx="851.1" cy="268.0" r="1.7"/><circle cx="852.6" cy="268.0" r="1.7"/><circle cx="854.0" cy="268.0" r="1.7"/><circle cx="855.5" cy="268.0" r="1.7"/><circle cx="856.9" cy="268.0" r="1.7"/><circle cx="858.4" cy="268.0" r="1.7"/><circle cx="859.8" cy="268.0" r="1.7"/><circle cx="861.3" cy="268.0" r="1.7"/><circle cx="694.0" cy="425.8" r="1.7"/><circle cx="695.0" cy="423.2" r="1.7"/><circle cx="696.0" cy="420.6" r="1.7"/><circle cx="697.0" cy="418.0" r="1.7"/><circle cx="698.0" cy="415.4" r="1.7"/><circle cx="698.9" cy="412.8" r="1.7"/><circle cx="699.9" cy="410.2" r="1.7"/><circle cx="700.9" cy="407.6" r="1.7"/><circle cx="701.9" cy="405.0" r="1.7"/><circle cx="702.9" cy="402.4" r="1.7"/><circle cx="703.9" cy="399.8" r="1.7"/><circle cx="704.9" cy="397.2" r="1.7"/><circle cx="705.9" cy="394.6" r="1.7"/><circle cx="706.9" cy="392.0" r="1.7"/><circle cx="707.8" cy="389.4" r="1.7"/><circle cx="708.8" cy="386.8" r="1.7"/><circle cx="709.8" cy="384.2" r="1.7"/><circle cx="710.8" cy="381.6" r="1.7"/><circle cx="711.8" cy="379.0" r="1.7"/><circle cx="712.8" cy="376.4" r="1.7"/><circle cx="713.8" cy="373.8" r="1.7"/><circle cx="714.8" cy="371.2" r="1.7"/><circle cx="715.7" cy="368.6" r="1.7"/><circle cx="716.7" cy="366.0" r="1.7"/><circle cx="717.7" cy="363.4" r="1.7"/><circle cx="718.7" cy="360.8" r="1.7"/><circle cx="719.7" cy="358.2" r="1.7"/><circle cx="720.7" cy="355.6" r="1.7"/><circle cx="721.7" cy="353.0" r="1.7"/><circle cx="722.7" cy="350.4" r="1.7"/><circle cx="723.7" cy="347.8" r="1.7"/><circle cx="724.6" cy="345.2" r="1.7"/><circle cx="725.6" cy="342.6" r="1.7"/><circle cx="726.6" cy="340.0" r="1.7"/><circle cx="727.6" cy="337.4" r="1.7"/><circle cx="728.6" cy="334.8" r="1.7"/><circle cx="729.6" cy="332.2" r="1.7"/><circle cx="730.6" cy="329.6" r="1.7"/><circle cx="731.6" cy="327.0" r="1.7"/><circle cx="732.6" cy="324.4" r="1.7"/><circle cx="733.5" cy="321.8" r="1.7"/><circle cx="734.5" cy="319.2" r="1.7"/><circle cx="735.5" cy="316.6" r="1.7"/><circle cx="736.5" cy="314.0" r="1.7"/><circle cx="737.5" cy="311.4" r="1.7"/><circle cx="738.5" cy="308.8" r="1.7"/><circle cx="739.5" cy="306.2" r="1.7"/><circle cx="740.5" cy="303.6" r="1.7"/><circle cx="741.5" cy="301.0" r="1.7"/><circle cx="742.4" cy="298.4" r="1.7"/><circle cx="743.4" cy="295.8" r="1.7"/><circle cx="744.4" cy="293.2" r="1.7"/><circle cx="745.4" cy="290.6" r="1.7"/><circle cx="746.4" cy="288.0" r="1.7"/><circle cx="747.4" cy="285.4" r="1.7"/><circle cx="748.4" cy="282.8" r="1.7"/><circle cx="749.4" cy="280.2" r="1.7"/><circle cx="750.3" cy="277.6" r="1.7"/><circle cx="751.3" cy="275.0" r="1.7"/><circle cx="752.3" cy="272.4" r="1.7"/><circle cx="753.3" cy="269.8" r="1.7"/></g><path d="M564.5 268.5V428H862.5" fill="none" stroke="#3c3c3c" stroke-width="1.2"/><path d="M564.5 268.5h4" stroke="#3c3c3c" stroke-width="1.2"/><text font-family="Liberation Sans, Arial, sans-serif" font-size="10.4" fill="#1a1a1a" x="559.2" y="274.8" text-anchor="end">-0.1401</text><path d="M564.5 300.3h4" stroke="#3c3c3c" stroke-width="1.2"/><text font-family="Liberation Sans, Arial, sans-serif" font-size="10.4" fill="#1a1a1a" x="559.2" y="306.6" text-anchor="end">-0.1702</text><path d="M564.5 332.1h4" stroke="#3c3c3c" stroke-width="1.2"/><text font-family="Liberation Sans, Arial, sans-serif" font-size="10.4" fill="#1a1a1a" x="559.2" y="338.4" text-anchor="end">-0.2003</text><path d="M564.5 363.9h4" stroke="#3c3c3c" stroke-width="1.2"/><text font-family="Liberation Sans, Arial, sans-serif" font-size="10.4" fill="#1a1a1a" x="559.2" y="370.2" text-anchor="end">-0.2304</text><path d="M564.5 395.7h4" stroke="#3c3c3c" stroke-width="1.2"/><text font-family="Liberation Sans, Arial, sans-serif" font-size="10.4" fill="#1a1a1a" x="559.2" y="402.0" text-anchor="end">-0.2605</text><path d="M564.5 427.5h4" stroke="#3c3c3c" stroke-width="1.2"/><text font-family="Liberation Sans, Arial, sans-serif" font-size="10.4" fill="#1a1a1a" x="559.2" y="433.8" text-anchor="end">-0.2907</text><path d="M710 428v-4.5" stroke="#3c3c3c" stroke-width="1.2"/><path d="M862.5 428v-4.5" stroke="#3c3c3c" stroke-width="1.2"/><text font-family="Liberation Sans, Arial, sans-serif" font-size="10.4" fill="#1a1a1a" x="564" y="446.5" text-anchor="middle">92.5</text><text font-family="Liberation Sans, Arial, sans-serif" font-size="10.4" fill="#1a1a1a" x="710" y="446.5" text-anchor="middle">97.5</text><text font-family="Liberation Sans, Arial, sans-serif" font-size="10.4" fill="#1a1a1a" x="863" y="446.5" text-anchor="middle">102.6</text><text font-family="Liberation Sans, Arial, sans-serif" font-size="10.4" fill="#1a1a1a" x="710" y="464" text-anchor="middle">Time (s)</text><text font-family="Liberation Sans, Arial, sans-serif" font-size="10.4" fill="#1a1a1a" transform="translate(520,348) rotate(-90)" text-anchor="middle">ε1</text><text font-family="Liberation Sans, Arial, sans-serif" font-size="10.4" fill="#1a1a1a" x="845.5" y="285.7" text-anchor="end" style="fill:#000">Exten_0</text><path d="M849 279.0h13.5" stroke="#2020ff" stroke-width="1.5"/><text font-family="Liberation Sans, Arial, sans-serif" font-size="10.4" fill="#1a1a1a" x="845.5" y="301.3" text-anchor="end" style="fill:#909090">Gauge_0</text><path d="M849 294.6h13.5" stroke="#ff1010" stroke-width="1.5"/><text font-family="Liberation Sans, Arial, sans-serif" font-size="10.4" fill="#1a1a1a" x="845.5" y="316.9" text-anchor="end" style="fill:#909090">Gauge_1</text><path d="M849 310.2h13.5" stroke="#108a10" stroke-width="1.5"/></svg>
</body></html>
